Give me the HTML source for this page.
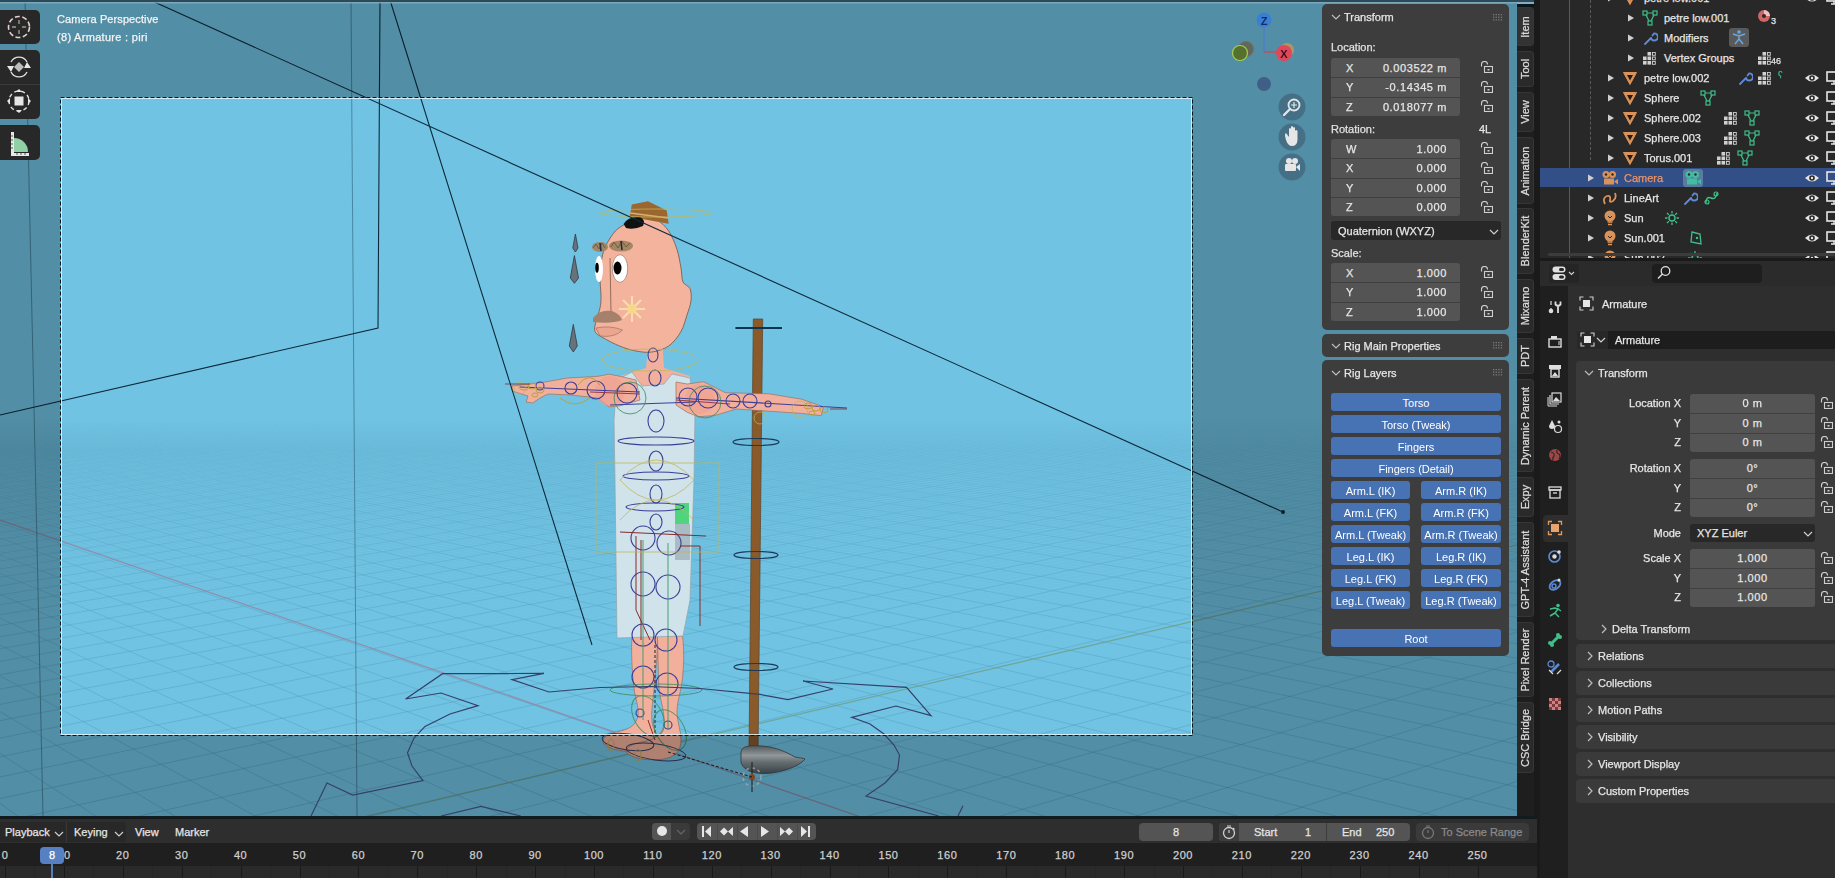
<!DOCTYPE html>
<html><head><meta charset="utf-8"><style>*{margin:0;padding:0;box-sizing:border-box}
html,body{width:1835px;height:878px;overflow:hidden;background:#1d1d1d;font-family:"Liberation Sans",sans-serif;font-size:11px;color:#e6e6e6}
.a{position:absolute}
.t{position:absolute;white-space:nowrap;line-height:15px;-webkit-text-stroke:0.25px currentColor}
.n{letter-spacing:0.6px}
.tbx{left:0;width:40px;background:#282828;border-radius:0 5px 5px 0}
.np{left:1322px;width:187px;background:#3d3d3d;border-radius:5px}
.fblk{background:#545454;border-radius:3px}
.lbl{color:#e0e0e0}
.btnb{background:#4772b3;border-radius:3px;color:#fff;text-align:center;height:18px;line-height:20px}
.tab{left:1517px;width:17px;border:1px solid #363636;border-left:none;border-radius:0 4px 4px 0}
.tab span{position:absolute;left:50%;top:50%;transform:translate(-50%,-50%) rotate(-90deg);white-space:nowrap;color:#dcdcdc;font-size:11px;line-height:12px;-webkit-text-stroke:0.25px currentColor}
</style></head><body>
<div class="a" style="left:0;top:0;width:1517px;height:816px;overflow:hidden">
<svg class="a" style="left:0;top:0" width="1517" height="816" viewBox="0 0 1517 816">
<defs><linearGradient id="gf" x1="0" y1="415" x2="0" y2="816" gradientUnits="userSpaceOnUse"><stop offset="0" stop-color="#fff" stop-opacity="0"/><stop offset="0.07" stop-color="#fff" stop-opacity="0.0"/><stop offset="0.2" stop-color="#fff" stop-opacity="0.25"/><stop offset="0.45" stop-color="#fff" stop-opacity="0.7"/><stop offset="1" stop-color="#fff" stop-opacity="1"/></linearGradient><linearGradient id="gb" x1="0" y1="420" x2="0" y2="620" gradientUnits="userSpaceOnUse"><stop offset="0" stop-color="#fff" stop-opacity="0"/><stop offset="0.15" stop-color="#fff" stop-opacity="0.5"/><stop offset="0.45" stop-color="#fff" stop-opacity="0.4"/><stop offset="1" stop-color="#fff" stop-opacity="0"/></linearGradient><mask id="gbm"><rect x="0" y="420" width="1517" height="200" fill="url(#gb)"/></mask><mask id="gm"><rect x="0" y="415" width="1517" height="401" fill="url(#gf)"/></mask></defs>
<rect width="1517" height="816" fill="#71c3e3"/>
<path mask="url(#gm)" d="M3764.0 -5.5L-3575.7 3177.0M3764.0 -5.5L-3661.5 2971.3M3764.0 -5.5L-3730.4 2793.4M3764.0 -5.5L-3786.5 2638.3M3764.0 -5.5L-3832.8 2502.0M3764.0 -5.5L-3871.6 2381.4M3764.0 -5.5L-3904.3 2274.0M3764.0 -5.5L-3932.3 2177.9M3764.0 -5.5L-3956.3 2091.4M3764.0 -5.5L-3977.1 2013.1M3764.0 -5.5L-3995.3 1941.9M3764.0 -5.5L-4011.3 1877.0M3764.0 -5.5L-4025.5 1817.6M3764.0 -5.5L-4038.1 1762.9M3764.0 -5.5L-4049.3 1712.5M3764.0 -5.5L-4059.4 1665.9M3764.0 -5.5L-4068.5 1622.7M3764.0 -5.5L-4076.8 1582.5M3764.0 -5.5L-4084.3 1545.0M3764.0 -5.5L-4091.1 1509.9M3764.0 -5.5L-4097.4 1477.1M3764.0 -5.5L-4103.1 1446.3M3764.0 -5.5L-4108.4 1417.4M3764.0 -5.5L-4113.3 1390.1M3764.0 -5.5L-4117.8 1364.4M3764.0 -5.5L-4122.0 1340.1M3764.0 -5.5L-4125.9 1317.1M3764.0 -5.5L-4129.5 1295.3M3764.0 -5.5L-4132.9 1274.6M3764.0 -5.5L-4136.1 1254.9M3764.0 -5.5L-4139.0 1236.2M3764.0 -5.5L-4141.8 1218.3M3764.0 -5.5L-4144.4 1201.3M3764.0 -5.5L-4146.9 1185.1M3764.0 -5.5L-4149.2 1169.6M3764.0 -5.5L-4151.4 1154.7M3764.0 -5.5L-4153.5 1140.5M3764.0 -5.5L-4155.4 1126.8M3764.0 -5.5L-4157.3 1113.8M3764.0 -5.5L-4159.1 1101.2M3764.0 -5.5L-4160.7 1089.1M3764.0 -5.5L-4162.3 1077.5M3764.0 -5.5L-4163.8 1066.4M3764.0 -5.5L-4165.3 1055.6M3764.0 -5.5L-4166.7 1045.2M3764.0 -5.5L-4168.0 1035.2M3764.0 -5.5L-4169.2 1025.6M3764.0 -5.5L-4170.5 1016.3M3764.0 -5.5L-4171.6 1007.3M3764.0 -5.5L-4172.7 998.6M3764.0 -5.5L-4173.8 990.2M3764.0 -5.5L-4174.8 982.0M3764.0 -5.5L-4175.8 974.1M3764.0 -5.5L-4176.7 966.5M3764.0 -5.5L-4177.6 959.1M3764.0 -5.5L-4178.5 951.9M3764.0 -5.5L-4179.3 944.9M3764.0 -5.5L-4180.1 938.2M3764.0 -5.5L-4180.9 931.6M3764.0 -5.5L-4181.6 925.2M3764.0 -5.5L-4182.4 919.0M3764.0 -5.5L-4183.1 913.0M3764.0 -5.5L-4183.7 907.1M3764.0 -5.5L-4184.4 901.4M3764.0 -5.5L-4185.0 895.9M3764.0 -5.5L-4185.6 890.5M3764.0 -5.5L-4186.2 885.2M3764.0 -5.5L-4186.8 880.1M3764.0 -5.5L-4187.4 875.1M3764.0 -5.5L-4187.9 870.2M3764.0 -5.5L-4188.4 865.5M3764.0 -5.5L-4188.9 860.8M3764.0 -5.5L-4189.4 856.3M3764.0 -5.5L-4189.9 851.9M3764.0 -5.5L-4190.4 847.5M3764.0 -5.5L-4190.8 843.3M3764.0 -5.5L-4191.3 839.2M3764.0 -5.5L-4191.7 835.2M-736.9 271.2L4831.7 6014.9M-736.9 271.2L5196.7 5637.0M-736.9 271.2L5498.9 5282.6M-736.9 271.2L5749.2 4954.1M-736.9 271.2L5957.1 4651.9M-736.9 271.2L6130.3 4375.0M-736.9 271.2L6275.4 4121.7M-736.9 271.2L6397.6 3890.4M-736.9 271.2L6501.0 3678.9M-736.9 271.2L6589.0 3485.3M-736.9 271.2L6664.3 3307.9M-736.9 271.2L6729.1 3145.1M-736.9 271.2L6785.0 2995.3M-736.9 271.2L6833.6 2857.1M-736.9 271.2L6876.0 2729.5M-736.9 271.2L6913.1 2611.4M-736.9 271.2L6945.8 2501.8M-736.9 271.2L6974.7 2399.8M-736.9 271.2L7000.3 2304.9M-736.9 271.2L7023.0 2216.2M-736.9 271.2L7043.3 2133.3M-736.9 271.2L7061.5 2055.6M-736.9 271.2L7077.9 1982.7M-736.9 271.2L7092.6 1914.1M-736.9 271.2L7105.8 1849.6M-736.9 271.2L7117.8 1788.7M-736.9 271.2L7128.7 1731.2M-736.9 271.2L7138.6 1676.8M-736.9 271.2L7147.7 1625.2M-736.9 271.2L7155.9 1576.3M-736.9 271.2L7163.4 1529.9M-736.9 271.2L7170.3 1485.8M-736.9 271.2L7176.7 1443.8M-736.9 271.2L7182.5 1403.7M-736.9 271.2L7187.9 1365.5M-736.9 271.2L7192.8 1329.1M-736.9 271.2L7197.4 1294.2M-736.9 271.2L7201.6 1260.9M-736.9 271.2L7205.5 1228.9M-736.9 271.2L7209.2 1198.3M-736.9 271.2L7212.5 1168.9M-736.9 271.2L7215.7 1140.8M-736.9 271.2L7218.6 1113.7M-736.9 271.2L7221.3 1087.6M-736.9 271.2L7223.8 1062.6M-736.9 271.2L7226.2 1038.5M-736.9 271.2L7228.4 1015.2M-736.9 271.2L7230.5 992.8M-736.9 271.2L7232.4 971.2M-736.9 271.2L7234.2 950.3M-736.9 271.2L7235.9 930.2M-736.9 271.2L7237.5 910.7M-736.9 271.2L7239.0 891.8M-736.9 271.2L7240.4 873.6M-736.9 271.2L7241.7 856.0M-736.9 271.2L7242.9 838.9M-736.9 271.2L7244.1 822.3M-736.9 271.2L7245.2 806.2M-736.9 271.2L7246.2 790.7M-736.9 271.2L7247.2 775.6M-736.9 271.2L7248.1 760.9M-736.9 271.2L7248.9 746.7M-736.9 271.2L7249.7 732.8M-736.9 271.2L7250.5 719.4M-736.9 271.2L7251.2 706.3M-736.9 271.2L7251.9 693.6" fill="none" stroke="#4a93b4" stroke-width="1" stroke-opacity="0.42"/>
<path mask="url(#gbm)" d="M3764.0 -5.5L-3575.7 3177.0M3764.0 -5.5L-3599.0 3122.7M3764.0 -5.5L-3621.0 3070.3M3764.0 -5.5L-3641.8 3019.9M3764.0 -5.5L-3661.5 2971.3M3764.0 -5.5L-3680.1 2924.5M3764.0 -5.5L-3697.8 2879.3M3764.0 -5.5L-3714.5 2835.6M3764.0 -5.5L-3730.4 2793.4M3764.0 -5.5L-3745.5 2752.7M3764.0 -5.5L-3759.8 2713.3M3764.0 -5.5L-3773.5 2675.2M3764.0 -5.5L-3786.5 2638.3M3764.0 -5.5L-3798.9 2602.6M3764.0 -5.5L-3810.7 2568.0M3764.0 -5.5L-3822.0 2534.5M3764.0 -5.5L-3832.8 2502.0M3764.0 -5.5L-3843.2 2470.5M3764.0 -5.5L-3853.1 2439.9M3764.0 -5.5L-3862.5 2410.2M3764.0 -5.5L-3871.6 2381.4M3764.0 -5.5L-3880.3 2353.4M3764.0 -5.5L-3888.6 2326.2M3764.0 -5.5L-3896.6 2299.8M3764.0 -5.5L-3904.3 2274.0M3764.0 -5.5L-3911.7 2249.0M3764.0 -5.5L-3918.8 2224.7M3764.0 -5.5L-3925.7 2201.0M3764.0 -5.5L-3932.3 2177.9M3764.0 -5.5L-3938.6 2155.4M3764.0 -5.5L-3944.7 2133.5M3764.0 -5.5L-3950.6 2112.2M3764.0 -5.5L-3956.3 2091.4M3764.0 -5.5L-3961.8 2071.1M3764.0 -5.5L-3967.1 2051.3M3764.0 -5.5L-3972.2 2031.9M3764.0 -5.5L-3977.1 2013.1M3764.0 -5.5L-3981.9 1994.7M3764.0 -5.5L-3986.5 1976.7M3764.0 -5.5L-3991.0 1959.1M3764.0 -5.5L-3995.3 1941.9M3764.0 -5.5L-3999.5 1925.2M3764.0 -5.5L-4003.6 1908.8M3764.0 -5.5L-4007.5 1892.7M3764.0 -5.5L-4011.3 1877.0M3764.0 -5.5L-4015.0 1861.7M3764.0 -5.5L-4018.6 1846.7M3764.0 -5.5L-4022.1 1832.0M3764.0 -5.5L-4025.5 1817.6M3764.0 -5.5L-4028.8 1803.5M3764.0 -5.5L-4032.0 1789.7M3764.0 -5.5L-4035.1 1776.2M3764.0 -5.5L-4038.1 1762.9M3764.0 -5.5L-4041.0 1750.0M3764.0 -5.5L-4043.8 1737.2M3764.0 -5.5L-4046.6 1724.8M3764.0 -5.5L-4049.3 1712.5M3764.0 -5.5L-4051.9 1700.5M3764.0 -5.5L-4054.5 1688.8M3764.0 -5.5L-4057.0 1677.2M3764.0 -5.5L-4059.4 1665.9M3764.0 -5.5L-4061.8 1654.8M3764.0 -5.5L-4064.1 1643.9M3764.0 -5.5L-4066.3 1633.2M3764.0 -5.5L-4068.5 1622.7M3764.0 -5.5L-4070.7 1612.4M3764.0 -5.5L-4072.8 1602.2M3764.0 -5.5L-4074.8 1592.3M3764.0 -5.5L-4076.8 1582.5M3764.0 -5.5L-4078.7 1572.9M3764.0 -5.5L-4080.6 1563.4M3764.0 -5.5L-4082.5 1554.1M3764.0 -5.5L-4084.3 1545.0M3764.0 -5.5L-4086.1 1536.0M3764.0 -5.5L-4087.8 1527.2M3764.0 -5.5L-4089.5 1518.5M3764.0 -5.5L-4091.1 1509.9M3764.0 -5.5L-4092.7 1501.5M3764.0 -5.5L-4094.3 1493.3M3764.0 -5.5L-4095.9 1485.1M3764.0 -5.5L-4097.4 1477.1M3764.0 -5.5L-4098.9 1469.3M3764.0 -5.5L-4100.3 1461.5M3764.0 -5.5L-4101.7 1453.9M3764.0 -5.5L-4103.1 1446.3M3764.0 -5.5L-4104.5 1438.9M3764.0 -5.5L-4105.8 1431.7M3764.0 -5.5L-4107.1 1424.5M3764.0 -5.5L-4108.4 1417.4M3764.0 -5.5L-4109.7 1410.4M3764.0 -5.5L-4110.9 1403.6M3764.0 -5.5L-4112.1 1396.8M3764.0 -5.5L-4113.3 1390.1M3764.0 -5.5L-4114.5 1383.6M3764.0 -5.5L-4115.6 1377.1M3764.0 -5.5L-4116.7 1370.7M3764.0 -5.5L-4117.8 1364.4M3764.0 -5.5L-4118.9 1358.2M3764.0 -5.5L-4119.9 1352.1M3764.0 -5.5L-4121.0 1346.0M3764.0 -5.5L-4122.0 1340.1M3764.0 -5.5L-4123.0 1334.2M3764.0 -5.5L-4124.0 1328.4M3764.0 -5.5L-4124.9 1322.7M3764.0 -5.5L-4125.9 1317.1M3764.0 -5.5L-4126.8 1311.5M3764.0 -5.5L-4127.7 1306.0M3764.0 -5.5L-4128.6 1300.6M3764.0 -5.5L-4129.5 1295.3M3764.0 -5.5L-4130.4 1290.0M3764.0 -5.5L-4131.2 1284.8M3764.0 -5.5L-4132.1 1279.6M3764.0 -5.5L-4132.9 1274.6M3764.0 -5.5L-4133.7 1269.6M3764.0 -5.5L-4134.5 1264.6M3764.0 -5.5L-4135.3 1259.7M3764.0 -5.5L-4136.1 1254.9M3764.0 -5.5L-4136.8 1250.1M3764.0 -5.5L-4137.6 1245.4M3764.0 -5.5L-4138.3 1240.8M3764.0 -5.5L-4139.0 1236.2M3764.0 -5.5L-4139.7 1231.6M3764.0 -5.5L-4140.4 1227.2M3764.0 -5.5L-4141.1 1222.7M3764.0 -5.5L-4141.8 1218.3M3764.0 -5.5L-4142.5 1214.0M3764.0 -5.5L-4143.1 1209.7M3764.0 -5.5L-4143.8 1205.5M3764.0 -5.5L-4144.4 1201.3M3764.0 -5.5L-4145.0 1197.2M3764.0 -5.5L-4145.7 1193.1M3764.0 -5.5L-4146.3 1189.1M3764.0 -5.5L-4146.9 1185.1M3764.0 -5.5L-4147.5 1181.1M3764.0 -5.5L-4148.1 1177.2M3764.0 -5.5L-4148.6 1173.4M3764.0 -5.5L-4149.2 1169.6M3764.0 -5.5L-4149.8 1165.8M3764.0 -5.5L-4150.3 1162.1M3764.0 -5.5L-4150.9 1158.4M3764.0 -5.5L-4151.4 1154.7M3764.0 -5.5L-4151.9 1151.1M3764.0 -5.5L-4152.4 1147.5M3764.0 -5.5L-4153.0 1144.0M3764.0 -5.5L-4153.5 1140.5M3764.0 -5.5L-4154.0 1137.0M3764.0 -5.5L-4154.5 1133.6M3764.0 -5.5L-4154.9 1130.2M3764.0 -5.5L-4155.4 1126.8M3764.0 -5.5L-4155.9 1123.5M3764.0 -5.5L-4156.4 1120.2M3764.0 -5.5L-4156.8 1117.0M3764.0 -5.5L-4157.3 1113.8M3764.0 -5.5L-4157.7 1110.6M3764.0 -5.5L-4158.2 1107.4M3764.0 -5.5L-4158.6 1104.3M3764.0 -5.5L-4159.1 1101.2M3764.0 -5.5L-4159.5 1098.1M3764.0 -5.5L-4159.9 1095.1M3764.0 -5.5L-4160.3 1092.1M3764.0 -5.5L-4160.7 1089.1M3764.0 -5.5L-4161.1 1086.2M3764.0 -5.5L-4161.5 1083.3M3764.0 -5.5L-4161.9 1080.4M3764.0 -5.5L-4162.3 1077.5M3764.0 -5.5L-4162.7 1074.7M3764.0 -5.5L-4163.1 1071.9M3764.0 -5.5L-4163.5 1069.1M3764.0 -5.5L-4163.8 1066.4M3764.0 -5.5L-4164.2 1063.6M3764.0 -5.5L-4164.6 1060.9M3764.0 -5.5L-4164.9 1058.3M3764.0 -5.5L-4165.3 1055.6M3764.0 -5.5L-4165.6 1053.0M3764.0 -5.5L-4166.0 1050.4M3764.0 -5.5L-4166.3 1047.8M3764.0 -5.5L-4166.7 1045.2M3764.0 -5.5L-4167.0 1042.7M3764.0 -5.5L-4167.3 1040.2M3764.0 -5.5L-4167.7 1037.7M3764.0 -5.5L-4168.0 1035.2M3764.0 -5.5L-4168.3 1032.8M3764.0 -5.5L-4168.6 1030.4M3764.0 -5.5L-4168.9 1028.0M3764.0 -5.5L-4169.2 1025.6M3764.0 -5.5L-4169.6 1023.2M3764.0 -5.5L-4169.9 1020.9M3764.0 -5.5L-4170.2 1018.6M3764.0 -5.5L-4170.5 1016.3M3764.0 -5.5L-4170.7 1014.0M3764.0 -5.5L-4171.0 1011.7M3764.0 -5.5L-4171.3 1009.5M3764.0 -5.5L-4171.6 1007.3M3764.0 -5.5L-4171.9 1005.1M3764.0 -5.5L-4172.2 1002.9M3764.0 -5.5L-4172.4 1000.7M3764.0 -5.5L-4172.7 998.6M3764.0 -5.5L-4173.0 996.5M3764.0 -5.5L-4173.2 994.3M3764.0 -5.5L-4173.5 992.2M3764.0 -5.5L-4173.8 990.2M3764.0 -5.5L-4174.0 988.1M3764.0 -5.5L-4174.3 986.1M3764.0 -5.5L-4174.5 984.0M3764.0 -5.5L-4174.8 982.0M3764.0 -5.5L-4175.0 980.0M3764.0 -5.5L-4175.3 978.1M3764.0 -5.5L-4175.5 976.1M3764.0 -5.5L-4175.8 974.1M3764.0 -5.5L-4176.0 972.2M3764.0 -5.5L-4176.2 970.3M3764.0 -5.5L-4176.5 968.4M3764.0 -5.5L-4176.7 966.5M3764.0 -5.5L-4176.9 964.6M3764.0 -5.5L-4177.2 962.8M3764.0 -5.5L-4177.4 960.9M3764.0 -5.5L-4177.6 959.1M3764.0 -5.5L-4177.8 957.3M3764.0 -5.5L-4178.0 955.5M3764.0 -5.5L-4178.3 953.7M3764.0 -5.5L-4178.5 951.9M3764.0 -5.5L-4178.7 950.1M3764.0 -5.5L-4178.9 948.4M3764.0 -5.5L-4179.1 946.7M3764.0 -5.5L-4179.3 944.9M3764.0 -5.5L-4179.5 943.2M3764.0 -5.5L-4179.7 941.5M3764.0 -5.5L-4179.9 939.9M3764.0 -5.5L-4180.1 938.2M3764.0 -5.5L-4180.3 936.5M3764.0 -5.5L-4180.5 934.9M3764.0 -5.5L-4180.7 933.2M3764.0 -5.5L-4180.9 931.6M3764.0 -5.5L-4181.1 930.0M3764.0 -5.5L-4181.3 928.4M3764.0 -5.5L-4181.5 926.8M3764.0 -5.5L-4181.6 925.2M3764.0 -5.5L-4181.8 923.7M3764.0 -5.5L-4182.0 922.1M3764.0 -5.5L-4182.2 920.6M3764.0 -5.5L-4182.4 919.0M3764.0 -5.5L-4182.5 917.5M3764.0 -5.5L-4182.7 916.0M3764.0 -5.5L-4182.9 914.5M3764.0 -5.5L-4183.1 913.0M3764.0 -5.5L-4183.2 911.5M3764.0 -5.5L-4183.4 910.1M3764.0 -5.5L-4183.6 908.6M3764.0 -5.5L-4183.7 907.1M3764.0 -5.5L-4183.9 905.7M3764.0 -5.5L-4184.1 904.3M3764.0 -5.5L-4184.2 902.9M3764.0 -5.5L-4184.4 901.4M3764.0 -5.5L-4184.6 900.0M3764.0 -5.5L-4184.7 898.6M3764.0 -5.5L-4184.9 897.3M3764.0 -5.5L-4185.0 895.9M3764.0 -5.5L-4185.2 894.5M3764.0 -5.5L-4185.3 893.2M3764.0 -5.5L-4185.5 891.8M3764.0 -5.5L-4185.6 890.5M3764.0 -5.5L-4185.8 889.2M3764.0 -5.5L-4185.9 887.8M3764.0 -5.5L-4186.1 886.5M3764.0 -5.5L-4186.2 885.2M3764.0 -5.5L-4186.4 883.9M3764.0 -5.5L-4186.5 882.6M3764.0 -5.5L-4186.7 881.4M3764.0 -5.5L-4186.8 880.1M3764.0 -5.5L-4186.9 878.8M3764.0 -5.5L-4187.1 877.6M3764.0 -5.5L-4187.2 876.3M3764.0 -5.5L-4187.4 875.1M3764.0 -5.5L-4187.5 873.9M3764.0 -5.5L-4187.6 872.6M3764.0 -5.5L-4187.8 871.4M3764.0 -5.5L-4187.9 870.2M3764.0 -5.5L-4188.0 869.0M3764.0 -5.5L-4188.2 867.8M3764.0 -5.5L-4188.3 866.6M3764.0 -5.5L-4188.4 865.5M3764.0 -5.5L-4188.5 864.3M3764.0 -5.5L-4188.7 863.1M3764.0 -5.5L-4188.8 862.0M3764.0 -5.5L-4188.9 860.8M3764.0 -5.5L-4189.1 859.7M3764.0 -5.5L-4189.2 858.5M3764.0 -5.5L-4189.3 857.4M3764.0 -5.5L-4189.4 856.3M3764.0 -5.5L-4189.5 855.2M3764.0 -5.5L-4189.7 854.1M3764.0 -5.5L-4189.8 853.0M3764.0 -5.5L-4189.9 851.9M3764.0 -5.5L-4190.0 850.8M3764.0 -5.5L-4190.1 849.7M3764.0 -5.5L-4190.2 848.6M3764.0 -5.5L-4190.4 847.5M3764.0 -5.5L-4190.5 846.5M3764.0 -5.5L-4190.6 845.4M3764.0 -5.5L-4190.7 844.4M3764.0 -5.5L-4190.8 843.3M3764.0 -5.5L-4190.9 842.3M3764.0 -5.5L-4191.0 841.3M3764.0 -5.5L-4191.1 840.2M3764.0 -5.5L-4191.3 839.2M3764.0 -5.5L-4191.4 838.2M3764.0 -5.5L-4191.5 837.2M3764.0 -5.5L-4191.6 836.2M3764.0 -5.5L-4191.7 835.2M3764.0 -5.5L-4191.8 834.2M3764.0 -5.5L-4191.9 833.2M3764.0 -5.5L-4192.0 832.2M-736.9 271.2L4831.7 6014.9M-736.9 271.2L4929.5 5918.5M-736.9 271.2L5022.8 5823.3M-736.9 271.2L5111.8 5729.4M-736.9 271.2L5196.7 5637.0M-736.9 271.2L5277.7 5546.0M-736.9 271.2L5355.0 5456.6M-736.9 271.2L5428.7 5368.8M-736.9 271.2L5498.9 5282.6M-736.9 271.2L5566.0 5198.0M-736.9 271.2L5629.9 5115.1M-736.9 271.2L5691.0 5033.8M-736.9 271.2L5749.2 4954.1M-736.9 271.2L5804.8 4876.1M-736.9 271.2L5857.9 4799.8M-736.9 271.2L5908.6 4725.0M-736.9 271.2L5957.1 4651.9M-736.9 271.2L6003.3 4580.4M-736.9 271.2L6047.6 4510.4M-736.9 271.2L6089.9 4441.9M-736.9 271.2L6130.3 4375.0M-736.9 271.2L6169.0 4309.5M-736.9 271.2L6206.1 4245.5M-736.9 271.2L6241.5 4182.9M-736.9 271.2L6275.4 4121.7M-736.9 271.2L6308.0 4061.9M-736.9 271.2L6339.1 4003.4M-736.9 271.2L6369.0 3946.3M-736.9 271.2L6397.6 3890.4M-736.9 271.2L6425.1 3835.7M-736.9 271.2L6451.4 3782.2M-736.9 271.2L6476.7 3730.0M-736.9 271.2L6501.0 3678.9M-736.9 271.2L6524.4 3628.9M-736.9 271.2L6546.8 3580.0M-736.9 271.2L6568.3 3532.1M-736.9 271.2L6589.0 3485.3M-736.9 271.2L6608.9 3439.5M-736.9 271.2L6628.1 3394.7M-736.9 271.2L6646.6 3350.9M-736.9 271.2L6664.3 3307.9M-736.9 271.2L6681.4 3265.9M-736.9 271.2L6697.9 3224.8M-736.9 271.2L6713.8 3184.5M-736.9 271.2L6729.1 3145.1M-736.9 271.2L6743.8 3106.5M-736.9 271.2L6758.0 3068.6M-736.9 271.2L6771.8 3031.6M-736.9 271.2L6785.0 2995.3M-736.9 271.2L6797.8 2959.7M-736.9 271.2L6810.2 2924.8M-736.9 271.2L6822.1 2890.6M-736.9 271.2L6833.6 2857.1M-736.9 271.2L6844.7 2824.3M-736.9 271.2L6855.5 2792.1M-736.9 271.2L6865.9 2760.5M-736.9 271.2L6876.0 2729.5M-736.9 271.2L6885.7 2699.1M-736.9 271.2L6895.2 2669.3M-736.9 271.2L6904.3 2640.1M-736.9 271.2L6913.1 2611.4M-736.9 271.2L6921.7 2583.2M-736.9 271.2L6930.0 2555.6M-736.9 271.2L6938.0 2528.4M-736.9 271.2L6945.8 2501.8M-736.9 271.2L6953.4 2475.6M-736.9 271.2L6960.7 2449.9M-736.9 271.2L6967.8 2424.6M-736.9 271.2L6974.7 2399.8M-736.9 271.2L6981.4 2375.5M-736.9 271.2L6987.9 2351.5M-736.9 271.2L6994.2 2328.0M-736.9 271.2L7000.3 2304.9M-736.9 271.2L7006.2 2282.1M-736.9 271.2L7012.0 2259.8M-736.9 271.2L7017.6 2237.8M-736.9 271.2L7023.0 2216.2M-736.9 271.2L7028.3 2195.0M-736.9 271.2L7033.5 2174.1M-736.9 271.2L7038.5 2153.5M-736.9 271.2L7043.3 2133.3M-736.9 271.2L7048.1 2113.4M-736.9 271.2L7052.7 2093.8M-736.9 271.2L7057.2 2074.6M-736.9 271.2L7061.5 2055.6M-736.9 271.2L7065.8 2037.0M-736.9 271.2L7069.9 2018.6M-736.9 271.2L7073.9 2000.5M-736.9 271.2L7077.9 1982.7M-736.9 271.2L7081.7 1965.2M-736.9 271.2L7085.4 1947.9M-736.9 271.2L7089.0 1930.9M-736.9 271.2L7092.6 1914.1M-736.9 271.2L7096.0 1897.6M-736.9 271.2L7099.4 1881.4M-736.9 271.2L7102.6 1865.4M-736.9 271.2L7105.8 1849.6M-736.9 271.2L7108.9 1834.0M-736.9 271.2L7112.0 1818.7M-736.9 271.2L7114.9 1803.6M-736.9 271.2L7117.8 1788.7M-736.9 271.2L7120.7 1774.0M-736.9 271.2L7123.4 1759.5M-736.9 271.2L7126.1 1745.2M-736.9 271.2L7128.7 1731.2M-736.9 271.2L7131.3 1717.3M-736.9 271.2L7133.8 1703.6M-736.9 271.2L7136.2 1690.1M-736.9 271.2L7138.6 1676.8M-736.9 271.2L7141.0 1663.6M-736.9 271.2L7143.3 1650.6M-736.9 271.2L7145.5 1637.8M-736.9 271.2L7147.7 1625.2M-736.9 271.2L7149.8 1612.8M-736.9 271.2L7151.9 1600.5M-736.9 271.2L7153.9 1588.3M-736.9 271.2L7155.9 1576.3M-736.9 271.2L7157.8 1564.5M-736.9 271.2L7159.7 1552.8M-736.9 271.2L7161.6 1541.3M-736.9 271.2L7163.4 1529.9M-736.9 271.2L7165.2 1518.7M-736.9 271.2L7167.0 1507.6M-736.9 271.2L7168.7 1496.6M-736.9 271.2L7170.3 1485.8M-736.9 271.2L7172.0 1475.1M-736.9 271.2L7173.6 1464.5M-736.9 271.2L7175.1 1454.1M-736.9 271.2L7176.7 1443.8M-736.9 271.2L7178.2 1433.6M-736.9 271.2L7179.7 1423.5M-736.9 271.2L7181.1 1413.6M-736.9 271.2L7182.5 1403.7M-736.9 271.2L7183.9 1394.0M-736.9 271.2L7185.2 1384.4M-736.9 271.2L7186.6 1374.9M-736.9 271.2L7187.9 1365.5M-736.9 271.2L7189.2 1356.3M-736.9 271.2L7190.4 1347.1M-736.9 271.2L7191.6 1338.0M-736.9 271.2L7192.8 1329.1M-736.9 271.2L7194.0 1320.2M-736.9 271.2L7195.2 1311.4M-736.9 271.2L7196.3 1302.8M-736.9 271.2L7197.4 1294.2M-736.9 271.2L7198.5 1285.7M-736.9 271.2L7199.6 1277.3M-736.9 271.2L7200.6 1269.1M-736.9 271.2L7201.6 1260.9M-736.9 271.2L7202.6 1252.7M-736.9 271.2L7203.6 1244.7M-736.9 271.2L7204.6 1236.8M-736.9 271.2L7205.5 1228.9M-736.9 271.2L7206.5 1221.1M-736.9 271.2L7207.4 1213.5M-736.9 271.2L7208.3 1205.8M-736.9 271.2L7209.2 1198.3M-736.9 271.2L7210.0 1190.9M-736.9 271.2L7210.9 1183.5M-736.9 271.2L7211.7 1176.2M-736.9 271.2L7212.5 1168.9M-736.9 271.2L7213.3 1161.8M-736.9 271.2L7214.1 1154.7M-736.9 271.2L7214.9 1147.7M-736.9 271.2L7215.7 1140.8M-736.9 271.2L7216.4 1133.9M-736.9 271.2L7217.2 1127.1M-736.9 271.2L7217.9 1120.3M-736.9 271.2L7218.6 1113.7M-736.9 271.2L7219.3 1107.1M-736.9 271.2L7220.0 1100.5M-736.9 271.2L7220.6 1094.1M-736.9 271.2L7221.3 1087.6M-736.9 271.2L7222.0 1081.3M-736.9 271.2L7222.6 1075.0M-736.9 271.2L7223.2 1068.8M-736.9 271.2L7223.8 1062.6M-736.9 271.2L7224.4 1056.5M-736.9 271.2L7225.0 1050.4M-736.9 271.2L7225.6 1044.4M-736.9 271.2L7226.2 1038.5M-736.9 271.2L7226.8 1032.6M-736.9 271.2L7227.3 1026.7M-736.9 271.2L7227.9 1020.9M-736.9 271.2L7228.4 1015.2M-736.9 271.2L7228.9 1009.5M-736.9 271.2L7229.5 1003.9M-736.9 271.2L7230.0 998.3M-736.9 271.2L7230.5 992.8M-736.9 271.2L7231.0 987.3M-736.9 271.2L7231.4 981.9M-736.9 271.2L7231.9 976.5M-736.9 271.2L7232.4 971.2M-736.9 271.2L7232.9 965.9M-736.9 271.2L7233.3 960.7M-736.9 271.2L7233.8 955.5M-736.9 271.2L7234.2 950.3M-736.9 271.2L7234.6 945.2M-736.9 271.2L7235.1 940.1M-736.9 271.2L7235.5 935.1M-736.9 271.2L7235.9 930.2M-736.9 271.2L7236.3 925.2M-736.9 271.2L7236.7 920.3M-736.9 271.2L7237.1 915.5M-736.9 271.2L7237.5 910.7M-736.9 271.2L7237.9 905.9M-736.9 271.2L7238.2 901.2M-736.9 271.2L7238.6 896.5M-736.9 271.2L7239.0 891.8M-736.9 271.2L7239.3 887.2M-736.9 271.2L7239.7 882.6M-736.9 271.2L7240.0 878.1M-736.9 271.2L7240.4 873.6M-736.9 271.2L7240.7 869.1M-736.9 271.2L7241.0 864.7M-736.9 271.2L7241.4 860.3M-736.9 271.2L7241.7 856.0M-736.9 271.2L7242.0 851.6M-736.9 271.2L7242.3 847.3M-736.9 271.2L7242.6 843.1M-736.9 271.2L7242.9 838.9M-736.9 271.2L7243.2 834.7M-736.9 271.2L7243.5 830.5M-736.9 271.2L7243.8 826.4M-736.9 271.2L7244.1 822.3M-736.9 271.2L7244.4 818.2M-736.9 271.2L7244.6 814.2M-736.9 271.2L7244.9 810.2M-736.9 271.2L7245.2 806.2M-736.9 271.2L7245.4 802.3M-736.9 271.2L7245.7 798.4M-736.9 271.2L7245.9 794.5M-736.9 271.2L7246.2 790.7M-736.9 271.2L7246.4 786.9M-736.9 271.2L7246.7 783.1M-736.9 271.2L7246.9 779.3M-736.9 271.2L7247.2 775.6M-736.9 271.2L7247.4 771.9M-736.9 271.2L7247.6 768.2M-736.9 271.2L7247.9 764.5M-736.9 271.2L7248.1 760.9M-736.9 271.2L7248.3 757.3M-736.9 271.2L7248.5 753.7M-736.9 271.2L7248.7 750.2M-736.9 271.2L7248.9 746.7M-736.9 271.2L7249.1 743.2M-736.9 271.2L7249.3 739.7M-736.9 271.2L7249.5 736.2M-736.9 271.2L7249.7 732.8M-736.9 271.2L7249.9 729.4M-736.9 271.2L7250.1 726.0M-736.9 271.2L7250.3 722.7M-736.9 271.2L7250.5 719.4M-736.9 271.2L7250.7 716.1M-736.9 271.2L7250.9 712.8M-736.9 271.2L7251.1 709.5M-736.9 271.2L7251.2 706.3M-736.9 271.2L7251.4 703.1M-736.9 271.2L7251.6 699.9M-736.9 271.2L7251.8 696.7M-736.9 271.2L7251.9 693.6M-736.9 271.2L7252.1 690.4M-736.9 271.2L7252.2 687.3M-736.9 271.2L7252.4 684.3" fill="none" stroke="#4a93b4" stroke-width="0.8" stroke-opacity="0.35"/>
<path d="M0 520L858 816" stroke="#9a7f9d" stroke-width="1.2" fill="none" opacity="0.8"/>
<path d="M367 816L1517 545" stroke="#6e9e83" stroke-width="1.2" fill="none" opacity="0.8"/>
<path d="M25 0L43 816M351 0L357 816" stroke="#3f7893" stroke-width="1" fill="none" opacity="0.8"/>
<path d="M753.3 319H762.7L758 752H749Z" fill="#8b5a2b" stroke="#5e4a33" stroke-width="0.8"/>
<path d="M735.4 328H782" stroke="#0a3550" stroke-width="1.8"/>
<ellipse cx="756" cy="442" rx="23" ry="3.5" fill="none" stroke="#1a3a5a" stroke-width="1.2"/>
<ellipse cx="756" cy="555" rx="22" ry="3.5" fill="none" stroke="#1a3a5a" stroke-width="1.2"/>
<ellipse cx="756" cy="667" rx="22" ry="3.5" fill="none" stroke="#1a3a5a" stroke-width="1.2"/>
<defs><linearGradient id="shoe" x1="0" y1="0" x2="0" y2="1"><stop offset="0" stop-color="#6f7a80"/><stop offset="0.35" stop-color="#c8cfd2"/><stop offset="0.6" stop-color="#8a959a"/><stop offset="1" stop-color="#4f5a60"/></linearGradient></defs>
<path d="M741 753C741 746 749 745 762 746C776 747 786 752 795 757C799 758 803 758 805 759C800 765 790 770 772 773C755 775 743 771 741 762Z" fill="url(#shoe)" stroke="#3f4a50" stroke-width="0.8"/>
<path d="M632 636H657.4C658 650 656 665 655 680C653 700 651 712 652 722C653 728 656 732 657 740C658 746 652 751 640 752C625 752 610 750 604 744C601 739 606 734 616 732C628 730 636 726 638 716C639 706 635 698 634 688C632 672 631 650 632 636Z" fill="#f2b09c" stroke="#9a7062" stroke-width="0.7"/>
<path d="M657.4 636H682.6C684 650 684 662 683 672C682 690 677 700 677 712C677 722 681 730 681 740C681 750 676 757 664 759C650 761 633 759 627 753C624 748 632 744 642 742C655 740 663 734 664 724C665 712 660 700 659 688C658 670 658 650 657.4 636Z" fill="#f2b09c" stroke="#9a7062" stroke-width="0.7"/>
<g fill="none" stroke="#34406a" stroke-width="1"><ellipse cx="628" cy="742" rx="26" ry="8" transform="rotate(8 628 742)"/><ellipse cx="656" cy="752" rx="30" ry="8" transform="rotate(8 656 752)"/></g>
<g fill="none" stroke="#c0b050" stroke-width="1"><ellipse cx="611" cy="745" rx="3" ry="6"/><ellipse cx="638" cy="755" rx="3" ry="6"/></g>
<path d="M648 346 L662.5 346 L664 368 L690 376 L690 392 L617 392 L620 376 L646 368Z" fill="#f2b09c"/>
<path d="M617 380 L632 372 L642 386 L664 384 L672 374 L690 378 L695 410 L694 480 L692 540 L690 600 L683 636 L617 638 L616 560 L615 480 L614 420Z" fill="#d0e2ea" stroke="#8fa3ad" stroke-width="0.7"/>
<rect x="675" y="503" width="14" height="21" fill="#52d47e"/><rect x="675" y="524" width="15" height="36" fill="#a9bcc4"/>
<path d="M512 386 L530 384 L545 382 L567.6 378 L598 376.3 L609 374.2 L620 376.3 L636 380 L640 400 L620 405.8 L609 406.9 L598 398 L569.8 394.9 L548 394 L540 398 L532.7 403 L526 402 L528 396 L512 391Z" fill="#f2b09c" stroke="#9a7062" stroke-width="0.7"/>
<path d="M676 382 L687.2 384 L703.6 381.8 L714.5 387.2 L725.4 392.7 L769 393.8 L801.7 399.2 L823.5 406.9 L821.3 415.6 L801.7 413.4 L769 411.2 L736.3 409 L714.5 415.6 L698 416.7 L687.2 412.3 L676 405Z" fill="#f2b09c" stroke="#9a7062" stroke-width="0.7"/>
<circle cx="610" cy="391" r="15" fill="#f0a090" opacity="0.6"/><circle cx="700" cy="399" r="15" fill="#f0a090" opacity="0.6"/>
<path d="M642 216.7C637.2 217.2 632.1 220.4 627.7 222.8C623.3 225.2 619.0 227.2 615.4 231C611.8 234.8 608.2 241.0 606 245.4C603.8 249.8 603.0 252.6 602 257.7C601.0 262.8 600.2 269.5 600 276C599.8 282.5 601.0 291.4 601 296.7C601.0 302.0 600.8 303.9 600 308C599.2 312.1 596.8 317.1 596 321C595.2 324.9 593.8 328.7 595 331.5C596.2 334.3 598.9 335.3 603 337.7C607.1 340.1 614.0 343.8 619.5 346C625.0 348.2 630.6 350.0 636 351C641.4 352.0 646.5 352.8 652 352C657.5 351.2 663.9 349.4 668.7 346C673.5 342.6 678.0 336.7 681 331.5C684.0 326.3 685.3 320.1 687 315C688.7 309.9 690.5 305.2 691 300.8C691.5 296.4 691.3 291.6 690 288.5C688.7 285.4 684.5 285.4 683 282C681.5 278.6 682.0 273.4 681 268C680.0 262.6 679.0 255.7 677 249.5C675.0 243.3 672.1 236.0 668.7 231C665.3 226.0 660.9 222.1 656.4 219.7C651.9 217.3 646.8 216.2 642 216.7Z" fill="#f3b39d" stroke="#7f6050" stroke-width="0.9"/>
<path d="M631.8 204.4 L648 201.3 L666.7 210.5 L668.7 223.8 L629.7 216.7Z" fill="#9c6630"/>
<path d="M630 213L668 218" stroke="#d8b070" stroke-width="1.5"/>
<path d="M623.6 224Q628 216 640 217Q646 220 643 226Q634 230 626 228Z" fill="#111"/>
<ellipse cx="620" cy="268.5" rx="7.7" ry="13.8" fill="#fff" stroke="#8a6a5a" stroke-width="0.6"/><ellipse cx="617.5" cy="268" rx="4" ry="6.5" fill="#000"/>
<ellipse cx="599" cy="269" rx="4" ry="13" fill="#fff"/><ellipse cx="597" cy="267.7" rx="1.8" ry="5" fill="#000"/>
<g fill="#a08462" opacity="0.95"><ellipse cx="600" cy="247" rx="8" ry="5"/><ellipse cx="621" cy="246" rx="12" ry="5.5"/></g>
<g fill="none" stroke="#6a5038" stroke-width="0.8"><path d="M593 248L596 244L599 249L602 243L605 248M611 247L614 242L618 248L622 241L626 247L630 243"/></g>
<path d="M600 243L601 251M621 241L622 250" stroke="#2a2a3a" stroke-width="1.6"/>
<path d="M610 258L611 313" stroke="#7a5a4a" stroke-width="0.8"/>
<path d="M593 318Q600 309 612 311Q620 314 622 320Q612 324 593 322Z" fill="#a5806a"/>
<path d="M596 328Q610 325 622.5 330Q615 338 600 336Z" fill="#eba590" stroke="#8a6a5a" stroke-width="0.6"/>
<g stroke="#fbe2b0" stroke-width="2" opacity="0.9"><path d="M632 296V322M619 309H645M623 300L641 318M641 300L623 318"/></g><circle cx="632" cy="309" r="5" fill="#f5d88a"/>
<g fill="none" stroke="#3b3f9a" stroke-width="1.1"><ellipse cx="653" cy="355" rx="5" ry="7"/><ellipse cx="655" cy="378" rx="6" ry="8"/><ellipse cx="656" cy="421" rx="8" ry="11"/><ellipse cx="656" cy="441" rx="38" ry="4"/><ellipse cx="656" cy="461" rx="7" ry="10"/><ellipse cx="656" cy="476" rx="33" ry="4"/><ellipse cx="656" cy="494" rx="6" ry="9"/><ellipse cx="655" cy="507" rx="29" ry="4"/><ellipse cx="656" cy="522" rx="6" ry="8"/><circle cx="643" cy="538" r="12"/><circle cx="669" cy="543" r="12"/><circle cx="643" cy="584" r="12"/><circle cx="668" cy="587" r="12"/><circle cx="643" cy="635" r="11"/><circle cx="666" cy="640" r="11"/><circle cx="643" cy="677" r="11"/><circle cx="667" cy="684" r="11"/><circle cx="640" cy="713" r="4"/><circle cx="668" cy="725" r="4"/><circle cx="571" cy="388" r="6"/><circle cx="540" cy="386" r="4"/><circle cx="596" cy="390" r="9"/><circle cx="627" cy="393" r="10"/><circle cx="688" cy="397" r="9"/><circle cx="708" cy="398" r="10"/><circle cx="733" cy="401" r="7"/><circle cx="750" cy="401" r="7"/><circle cx="768" cy="404" r="3"/><path d="M520 387L640 392M676 398L847 408M610 405L695 402"/></g>
<g fill="none" stroke="#8a2a2a" stroke-width="1"><path d="M620 532L706 536M636 536V610L650 640M680 546H700V626M641 540V640M648 720L655 740"/></g>
<g fill="none" stroke="#3a9a6a" stroke-width="0.9"><path d="M643 540V720M668 543V730"/></g>
<path d="M655 645V735" stroke="#222" stroke-width="1" stroke-dasharray="3 2"/>
<g fill="none" stroke="#c0b555" stroke-width="1" opacity="0.75"><rect x="596" y="463" width="123" height="89"/><ellipse cx="656" cy="213" rx="56" ry="4"/><ellipse cx="650" cy="360" rx="48" ry="11"/><path d="M620 480Q656 440 694 480Q656 520 620 480M620 520Q656 480 694 520"/><circle cx="520" cy="388" r="6"/><circle cx="800" cy="409" r="8"/><circle cx="760" cy="418" r="6"/></g>
<g fill="none" stroke="#3a8a5a" stroke-width="1" opacity="0.8"><ellipse cx="656" cy="690" rx="46" ry="6"/><ellipse cx="648" cy="716" rx="14" ry="22" transform="rotate(-30 648 716)"/><ellipse cx="670" cy="730" rx="14" ry="22" transform="rotate(-30 670 730)"/><circle cx="630" cy="398" r="16"/><circle cx="705" cy="402" r="16"/></g>
<g fill="none" stroke="#b8a040" stroke-width="1"><ellipse cx="524" cy="387" rx="5" ry="3"/><ellipse cx="532" cy="386" rx="4" ry="3"/><ellipse cx="540" cy="390" rx="4" ry="3"/><ellipse cx="535" cy="395" rx="3" ry="2"/><ellipse cx="808" cy="406" rx="4" ry="3"/><ellipse cx="816" cy="408" rx="4" ry="3"/><ellipse cx="824" cy="410" rx="4" ry="3"/><ellipse cx="812" cy="413" rx="3" ry="2"/><path d="M578 385Q590 370 600 385M560 398Q575 410 590 398"/></g>
<g fill="none" stroke="#8a3040" stroke-width="0.9"><path d="M505 384L530 384M830 409L847 409M590 392L640 394M676 400L730 404"/></g>
<path d="M575.4 234L578 248L575.4 252L572.8 248ZM574.4 255.6L578.5 278L574.4 283.3L570.3 278ZM573.3 324.4L577.3 346L573.3 352L569.3 346Z" fill="#66737d" stroke="#2e3a44" stroke-width="0.8"/>
<circle cx="752" cy="777" r="9" fill="none" stroke="#e8e8e8" stroke-width="1.5" stroke-dasharray="3 3" opacity="0.8"/><path d="M752 762V792" stroke="#222" stroke-width="1"/><circle cx="752" cy="777" r="3" fill="#b0602a"/>
<path d="M668 752L752 777" stroke="#222" stroke-width="1" stroke-dasharray="3 2"/>
<path d="M150 0L1283 512M390 0L592 645M380 0L378 328L0 415" stroke="#0d2a3c" stroke-width="1.1" fill="none"/>
<circle cx="1283" cy="512" r="2" fill="#0d2a3c"/>
<path d="M0 0H1517V816H0Z M60 97V735H1192V97Z" fill="#000" fill-opacity="0.27" fill-rule="evenodd"/>
<g fill="none" stroke="#34406a" stroke-width="1.2"><path d="M311 816 L327 783 L352.7 795 L423 780.6 L412 766 L407.5 752.8 L414 738 L425 726.4 L450 714 L478 705.6 L441 693 L405.6 699 L442.6 673.7 L544 673.4 L512 679.6 L549 692 L600 687.5 L650 686.5 L700 688.5 L760 694.4 L788 699.7 L833 689 L803 681 L906.5 687.4 L931 715.6 L896 706 L851.8 717.4 L870 724 L884 734 L894 745 L899.5 755 L897.7 769.4 L885 783 L866 796 L938.8 816"/><path d="M441 816L481 806.4L520.7 816M963 805.8L958 816"/></g>
<rect x="61.5" y="98.5" width="1130" height="636" fill="none" stroke="#e8f4fa" stroke-width="1" opacity="0.85"/>
<rect x="60.5" y="97.5" width="1132" height="638" fill="none" stroke="#0a1418" stroke-width="1" stroke-dasharray="4 2"/>
<rect x="0" y="0" width="1517" height="2" fill="#2c4b5a"/><rect x="0" y="2" width="1517" height="1.5" fill="#86aebf" opacity="0.8"/>
</svg>
<div class="t" style="left:57px;top:12px;color:#f4f4f4;font-size:11px;letter-spacing:0.1px">Camera Perspective</div>
<div class="t" style="left:57px;top:30px;color:#f4f4f4;font-size:11px;letter-spacing:0.3px">(8) Armature : piri</div>
<div class="a tbx" style="top:10px;height:34px"></div>
<div class="a tbx" style="top:50px;height:69px"></div>
<div class="a" style="left:0;top:84px;width:40px;height:1px;background:#3a3a3a"></div>
<div class="a tbx" style="top:125px;height:35px"></div>
<svg class="a" style="left:0;top:0" width="60" height="170" viewBox="0 0 60 170">
<circle cx="19" cy="27" r="10.5" fill="none" stroke="#e6cfcf" stroke-width="1.6" stroke-dasharray="5 2.5"/>
<path d="M19 20V24M19 30V34M12 27H16M22 27H26" stroke="#9a9a9a" stroke-width="1.4"/>
<path d="M11 62A9 9 0 0 1 27 62M27 72A9 9 0 0 1 11 72" fill="none" stroke="#e0e0e0" stroke-width="1.4"/>
<path d="M7 66L11 72L14 66ZM24 68L27 62L31 68Z" fill="#e6e6e6"/>
<path d="M19 62L24 67L19 72L14 67Z" fill="#bdbdbd"/>
<circle cx="19" cy="101" r="10" fill="none" stroke="#e0e0e0" stroke-width="1.4" stroke-dasharray="4 3"/>
<rect x="14.5" y="96.5" width="9" height="9" fill="#e6e6e6"/>
<path d="M16 92L19 89L22 92ZM16 110L19 113L22 110ZM10 98L7 101L10 104ZM28 98L31 101L28 104Z" fill="#e6e6e6"/>
<path d="M11 153V132H14V153H29V156H11Z" fill="#e8e8e8"/>
<path d="M14 152V138A14 14 0 0 1 28 152Z" fill="#8fd0a5"/>
<path d="M11 136H13M11 140H13M11 144H13M11 148H13M17 153V155M21 153V155M25 153V155" stroke="#555" stroke-width="1"/>
</svg>
<svg class="a" style="left:1220px;top:0" width="100" height="190" viewBox="1220 0 100 190">
<path d="M1264 21V52H1284" stroke="#4f7fc8" stroke-width="1.6" fill="none"/>
<path d="M1264 52H1285" stroke="#b75b5b" stroke-width="1.6"/>
<circle cx="1246" cy="49" r="7.5" fill="#5f6a56" stroke="#7a6a6a" stroke-width="1.2"/>
<circle cx="1240" cy="53" r="7.5" fill="#56702e" stroke="#a4d04e" stroke-width="1.2"/>
<circle cx="1264" cy="20" r="7.5" fill="#3a7fd6"/>
<text x="1264" y="24.5" font-size="11" font-weight="bold" text-anchor="middle" fill="#1a2a5a" font-family="Liberation Sans">Z</text>
<circle cx="1287" cy="50" r="7" fill="#d49a4a" opacity="0.7"/>
<circle cx="1284" cy="53" r="8" fill="#e0485a"/>
<text x="1284" y="57.5" font-size="11" font-weight="bold" text-anchor="middle" fill="#3a1020" font-family="Liberation Sans">X</text>
<circle cx="1264" cy="84" r="7" fill="#3f5f87"/>
<circle cx="1292" cy="107" r="13.5" fill="#456f85"/>
<circle cx="1292" cy="137" r="13.5" fill="#456f85"/>
<circle cx="1292" cy="167" r="13.5" fill="#456f85"/>
<circle cx="1294" cy="105" r="5.5" fill="none" stroke="#e6e6e6" stroke-width="1.8"/>
<path d="M1294 102V108M1291 105H1297" stroke="#e6e6e6" stroke-width="1.2"/>
<path d="M1290 109L1284 115" stroke="#e6e6e6" stroke-width="2.4" stroke-linecap="round"/>
<path d="M1286 140Q1284 134 1286 133L1289 137V129Q1290 127 1291 129V135V127Q1292 125 1293 127V135V128Q1294 126 1295 128V136V131Q1296 129 1297.5 131V140Q1297 146 1292 146Q1288 146 1286 140Z" fill="#e6e6e6"/>
<circle cx="1289" cy="161" r="3" fill="#e6e6e6"/><circle cx="1295" cy="161" r="3" fill="#e6e6e6"/>
<rect x="1285" y="164" width="11" height="7" rx="1" fill="#e6e6e6"/>
<path d="M1296 167L1300 164V171Z" fill="#e6e6e6"/>
</svg>
<div class="a np" style="top:4px;height:326px"></div>
<svg class="a" style="left:1331px;top:14px" width="10" height="6" viewBox="0 0 10 6"><path d="M1 1L5 5L9 1" fill="none" stroke="#bdbdbd" stroke-width="1.2"/></svg>
<div class="t" style="left:1344px;top:10px">Transform</div>
<svg class="a" style="left:1493px;top:14px" width="11" height="8"><rect x="0.0" y="0.0" width="1.3" height="1.3" fill="#7a7a7a"/><rect x="0.0" y="2.6" width="1.3" height="1.3" fill="#7a7a7a"/><rect x="0.0" y="5.2" width="1.3" height="1.3" fill="#7a7a7a"/><rect x="2.6" y="0.0" width="1.3" height="1.3" fill="#7a7a7a"/><rect x="2.6" y="2.6" width="1.3" height="1.3" fill="#7a7a7a"/><rect x="2.6" y="5.2" width="1.3" height="1.3" fill="#7a7a7a"/><rect x="5.2" y="0.0" width="1.3" height="1.3" fill="#7a7a7a"/><rect x="5.2" y="2.6" width="1.3" height="1.3" fill="#7a7a7a"/><rect x="5.2" y="5.2" width="1.3" height="1.3" fill="#7a7a7a"/><rect x="7.8" y="0.0" width="1.3" height="1.3" fill="#7a7a7a"/><rect x="7.8" y="2.6" width="1.3" height="1.3" fill="#7a7a7a"/><rect x="7.8" y="5.2" width="1.3" height="1.3" fill="#7a7a7a"/></svg>
<div class="t lbl" style="left:1331px;top:40px">Location:</div>
<div class="a fblk" style="left:1331px;top:58px;width:129px;height:58px"></div><div class="t" style="left:1346px;top:60.5px">X</div><div class="t n" style="right:70px;top:60.5px">0.003522 m</div><div class="a" style="left:1479px;top:61.0px"><svg width="14" height="12" viewBox="0 0 14 12"><path d="M2.5 5.5V3.5A3 3 0 0 1 8.5 3.5" fill="none" stroke="#cfcfcf" stroke-width="1.1"/><rect x="5.5" y="5.5" width="8" height="6" fill="none" stroke="#cfcfcf" stroke-width="1.1"/><rect x="8.5" y="8" width="2" height="1.5" fill="#cfcfcf"/></svg></div><div class="a" style="left:1331px;top:77.0px;width:129px;height:1px;background:#3f3f3f"></div><div class="t" style="left:1346px;top:80.0px">Y</div><div class="t n" style="right:70px;top:80.0px">-0.14345 m</div><div class="a" style="left:1479px;top:80.5px"><svg width="14" height="12" viewBox="0 0 14 12"><path d="M2.5 5.5V3.5A3 3 0 0 1 8.5 3.5" fill="none" stroke="#cfcfcf" stroke-width="1.1"/><rect x="5.5" y="5.5" width="8" height="6" fill="none" stroke="#cfcfcf" stroke-width="1.1"/><rect x="8.5" y="8" width="2" height="1.5" fill="#cfcfcf"/></svg></div><div class="a" style="left:1331px;top:96.5px;width:129px;height:1px;background:#3f3f3f"></div><div class="t" style="left:1346px;top:99.5px">Z</div><div class="t n" style="right:70px;top:99.5px">0.018077 m</div><div class="a" style="left:1479px;top:100.0px"><svg width="14" height="12" viewBox="0 0 14 12"><path d="M2.5 5.5V3.5A3 3 0 0 1 8.5 3.5" fill="none" stroke="#cfcfcf" stroke-width="1.1"/><rect x="5.5" y="5.5" width="8" height="6" fill="none" stroke="#cfcfcf" stroke-width="1.1"/><rect x="8.5" y="8" width="2" height="1.5" fill="#cfcfcf"/></svg></div>
<div class="t lbl" style="left:1331px;top:122px">Rotation:</div>
<div class="t" style="left:1479px;top:122px">4L</div>
<div class="a fblk" style="left:1331px;top:139px;width:129px;height:77px"></div><div class="t" style="left:1346px;top:141.5px">W</div><div class="t n" style="right:70px;top:141.5px">1.000</div><div class="a" style="left:1479px;top:142.0px"><svg width="14" height="12" viewBox="0 0 14 12"><path d="M2.5 5.5V3.5A3 3 0 0 1 8.5 3.5" fill="none" stroke="#cfcfcf" stroke-width="1.1"/><rect x="5.5" y="5.5" width="8" height="6" fill="none" stroke="#cfcfcf" stroke-width="1.1"/><rect x="8.5" y="8" width="2" height="1.5" fill="#cfcfcf"/></svg></div><div class="a" style="left:1331px;top:158.0px;width:129px;height:1px;background:#3f3f3f"></div><div class="t" style="left:1346px;top:161.0px">X</div><div class="t n" style="right:70px;top:161.0px">0.000</div><div class="a" style="left:1479px;top:161.5px"><svg width="14" height="12" viewBox="0 0 14 12"><path d="M2.5 5.5V3.5A3 3 0 0 1 8.5 3.5" fill="none" stroke="#cfcfcf" stroke-width="1.1"/><rect x="5.5" y="5.5" width="8" height="6" fill="none" stroke="#cfcfcf" stroke-width="1.1"/><rect x="8.5" y="8" width="2" height="1.5" fill="#cfcfcf"/></svg></div><div class="a" style="left:1331px;top:177.5px;width:129px;height:1px;background:#3f3f3f"></div><div class="t" style="left:1346px;top:180.5px">Y</div><div class="t n" style="right:70px;top:180.5px">0.000</div><div class="a" style="left:1479px;top:181.0px"><svg width="14" height="12" viewBox="0 0 14 12"><path d="M2.5 5.5V3.5A3 3 0 0 1 8.5 3.5" fill="none" stroke="#cfcfcf" stroke-width="1.1"/><rect x="5.5" y="5.5" width="8" height="6" fill="none" stroke="#cfcfcf" stroke-width="1.1"/><rect x="8.5" y="8" width="2" height="1.5" fill="#cfcfcf"/></svg></div><div class="a" style="left:1331px;top:197.0px;width:129px;height:1px;background:#3f3f3f"></div><div class="t" style="left:1346px;top:200.0px">Z</div><div class="t n" style="right:70px;top:200.0px">0.000</div><div class="a" style="left:1479px;top:200.5px"><svg width="14" height="12" viewBox="0 0 14 12"><path d="M2.5 5.5V3.5A3 3 0 0 1 8.5 3.5" fill="none" stroke="#cfcfcf" stroke-width="1.1"/><rect x="5.5" y="5.5" width="8" height="6" fill="none" stroke="#cfcfcf" stroke-width="1.1"/><rect x="8.5" y="8" width="2" height="1.5" fill="#cfcfcf"/></svg></div>
<div class="a" style="left:1331px;top:221px;width:170px;height:19px;background:#282828;border-radius:3px"></div>
<div class="t" style="left:1338px;top:224px">Quaternion (WXYZ)</div>
<svg class="a" style="left:1489px;top:229px" width="10" height="6" viewBox="0 0 10 6"><path d="M1 1L5 5L9 1" fill="none" stroke="#d0d0d0" stroke-width="1.2"/></svg>
<div class="t lbl" style="left:1331px;top:246px">Scale:</div>
<div class="a fblk" style="left:1331px;top:263px;width:129px;height:58px"></div><div class="t" style="left:1346px;top:265.5px">X</div><div class="t n" style="right:70px;top:265.5px">1.000</div><div class="a" style="left:1479px;top:266.0px"><svg width="14" height="12" viewBox="0 0 14 12"><path d="M2.5 5.5V3.5A3 3 0 0 1 8.5 3.5" fill="none" stroke="#cfcfcf" stroke-width="1.1"/><rect x="5.5" y="5.5" width="8" height="6" fill="none" stroke="#cfcfcf" stroke-width="1.1"/><rect x="8.5" y="8" width="2" height="1.5" fill="#cfcfcf"/></svg></div><div class="a" style="left:1331px;top:282.0px;width:129px;height:1px;background:#3f3f3f"></div><div class="t" style="left:1346px;top:285.0px">Y</div><div class="t n" style="right:70px;top:285.0px">1.000</div><div class="a" style="left:1479px;top:285.5px"><svg width="14" height="12" viewBox="0 0 14 12"><path d="M2.5 5.5V3.5A3 3 0 0 1 8.5 3.5" fill="none" stroke="#cfcfcf" stroke-width="1.1"/><rect x="5.5" y="5.5" width="8" height="6" fill="none" stroke="#cfcfcf" stroke-width="1.1"/><rect x="8.5" y="8" width="2" height="1.5" fill="#cfcfcf"/></svg></div><div class="a" style="left:1331px;top:301.5px;width:129px;height:1px;background:#3f3f3f"></div><div class="t" style="left:1346px;top:304.5px">Z</div><div class="t n" style="right:70px;top:304.5px">1.000</div><div class="a" style="left:1479px;top:305.0px"><svg width="14" height="12" viewBox="0 0 14 12"><path d="M2.5 5.5V3.5A3 3 0 0 1 8.5 3.5" fill="none" stroke="#cfcfcf" stroke-width="1.1"/><rect x="5.5" y="5.5" width="8" height="6" fill="none" stroke="#cfcfcf" stroke-width="1.1"/><rect x="8.5" y="8" width="2" height="1.5" fill="#cfcfcf"/></svg></div>
<div class="a np" style="top:334px;height:23px"></div>
<svg class="a" style="left:1331px;top:343px" width="10" height="6" viewBox="0 0 10 6"><path d="M1 1L5 5L9 1" fill="none" stroke="#bdbdbd" stroke-width="1.2"/></svg>
<div class="t" style="left:1344px;top:339px">Rig Main Properties</div>
<svg class="a" style="left:1493px;top:342px" width="11" height="8"><rect x="0.0" y="0.0" width="1.3" height="1.3" fill="#7a7a7a"/><rect x="0.0" y="2.6" width="1.3" height="1.3" fill="#7a7a7a"/><rect x="0.0" y="5.2" width="1.3" height="1.3" fill="#7a7a7a"/><rect x="2.6" y="0.0" width="1.3" height="1.3" fill="#7a7a7a"/><rect x="2.6" y="2.6" width="1.3" height="1.3" fill="#7a7a7a"/><rect x="2.6" y="5.2" width="1.3" height="1.3" fill="#7a7a7a"/><rect x="5.2" y="0.0" width="1.3" height="1.3" fill="#7a7a7a"/><rect x="5.2" y="2.6" width="1.3" height="1.3" fill="#7a7a7a"/><rect x="5.2" y="5.2" width="1.3" height="1.3" fill="#7a7a7a"/><rect x="7.8" y="0.0" width="1.3" height="1.3" fill="#7a7a7a"/><rect x="7.8" y="2.6" width="1.3" height="1.3" fill="#7a7a7a"/><rect x="7.8" y="5.2" width="1.3" height="1.3" fill="#7a7a7a"/></svg>
<div class="a np" style="top:360px;height:296px"></div>
<svg class="a" style="left:1331px;top:370px" width="10" height="6" viewBox="0 0 10 6"><path d="M1 1L5 5L9 1" fill="none" stroke="#bdbdbd" stroke-width="1.2"/></svg>
<div class="t" style="left:1344px;top:366px">Rig Layers</div>
<svg class="a" style="left:1493px;top:369px" width="11" height="8"><rect x="0.0" y="0.0" width="1.3" height="1.3" fill="#7a7a7a"/><rect x="0.0" y="2.6" width="1.3" height="1.3" fill="#7a7a7a"/><rect x="0.0" y="5.2" width="1.3" height="1.3" fill="#7a7a7a"/><rect x="2.6" y="0.0" width="1.3" height="1.3" fill="#7a7a7a"/><rect x="2.6" y="2.6" width="1.3" height="1.3" fill="#7a7a7a"/><rect x="2.6" y="5.2" width="1.3" height="1.3" fill="#7a7a7a"/><rect x="5.2" y="0.0" width="1.3" height="1.3" fill="#7a7a7a"/><rect x="5.2" y="2.6" width="1.3" height="1.3" fill="#7a7a7a"/><rect x="5.2" y="5.2" width="1.3" height="1.3" fill="#7a7a7a"/><rect x="7.8" y="0.0" width="1.3" height="1.3" fill="#7a7a7a"/><rect x="7.8" y="2.6" width="1.3" height="1.3" fill="#7a7a7a"/><rect x="7.8" y="5.2" width="1.3" height="1.3" fill="#7a7a7a"/></svg>
<div class="a btnb" style="left:1331px;top:393px;width:170px">Torso</div>
<div class="a btnb" style="left:1331px;top:415px;width:170px">Torso (Tweak)</div>
<div class="a btnb" style="left:1331px;top:437px;width:170px">Fingers</div>
<div class="a btnb" style="left:1331px;top:459px;width:170px">Fingers (Detail)</div>
<div class="a btnb" style="left:1331px;top:481px;width:79px">Arm.L (IK)</div>
<div class="a btnb" style="left:1421px;top:481px;width:80px">Arm.R (IK)</div>
<div class="a btnb" style="left:1331px;top:503px;width:79px">Arm.L (FK)</div>
<div class="a btnb" style="left:1421px;top:503px;width:80px">Arm.R (FK)</div>
<div class="a btnb" style="left:1331px;top:525px;width:79px">Arm.L (Tweak)</div>
<div class="a btnb" style="left:1421px;top:525px;width:80px">Arm.R (Tweak)</div>
<div class="a btnb" style="left:1331px;top:547px;width:79px">Leg.L (IK)</div>
<div class="a btnb" style="left:1421px;top:547px;width:80px">Leg.R (IK)</div>
<div class="a btnb" style="left:1331px;top:569px;width:79px">Leg.L (FK)</div>
<div class="a btnb" style="left:1421px;top:569px;width:80px">Leg.R (FK)</div>
<div class="a btnb" style="left:1331px;top:591px;width:79px">Leg.L (Tweak)</div>
<div class="a btnb" style="left:1421px;top:591px;width:80px">Leg.R (Tweak)</div>
<div class="a btnb" style="left:1331px;top:629px;width:170px">Root</div>
</div>
<div class="a" style="left:1517px;top:0;width:23px;height:816px;background:#1e1e1e"></div>
<div class="a" style="left:1517px;top:0;width:20px;height:2px;background:#2c4b5a"></div>
<div class="a" style="left:1517px;top:2px;width:20px;height:1.5px;background:#86aebf"></div>
<div class="a" style="left:1517px;top:3.5px;width:20px;height:3px;background:#0a161c"></div>
<div class="a tab" style="top:7px;height:39px;background:#333333"><span>Item</span></div>
<div class="a tab" style="top:51px;height:36px;background:#2a2a2a"><span>Tool</span></div>
<div class="a tab" style="top:92px;height:40px;background:#2a2a2a"><span>View</span></div>
<div class="a tab" style="top:137px;height:67px;background:#2a2a2a"><span>Animation</span></div>
<div class="a tab" style="top:208px;height:66px;background:#2a2a2a"><span>BlenderKit</span></div>
<div class="a tab" style="top:279px;height:54px;background:#2a2a2a"><span>Mixamo</span></div>
<div class="a tab" style="top:338px;height:36px;background:#2a2a2a"><span>PDT</span></div>
<div class="a tab" style="top:379px;height:93px;background:#2a2a2a"><span>Dynamic Parent</span></div>
<div class="a tab" style="top:477px;height:40px;background:#2a2a2a"><span>Expy</span></div>
<div class="a tab" style="top:522px;height:95px;background:#2a2a2a"><span>GPT-4 Assistant</span></div>
<div class="a tab" style="top:622px;height:75px;background:#2a2a2a"><span>Pixel Render</span></div>
<div class="a tab" style="top:702px;height:71px;background:#2a2a2a"><span>CSC Bridge</span></div>
<div class="a" style="left:1540px;top:0;width:295px;height:258px;background:#282828"></div>
<div class="a" style="left:1534px;top:0;width:6px;height:878px;background:#1a1a1a"></div>
<div class="a" style="left:1569px;top:0;width:1px;height:258px;background:#5a5a5a"></div>
<div class="a" style="left:1590px;top:0;width:0;height:160px;border-left:1px dashed #5a5a5a"></div>
<div class="a" style="left:1540px;top:168px;width:295px;height:19px;background:#334f88"></div>
<svg class="a" style="left:1607px;top:-6px" width="8" height="8" viewBox="0 0 8 8"><path d="M1 0.5L7 4L1 7.5Z" fill="#cfcfcf"/></svg>
<svg class="a" style="left:1622px;top:-10px" width="16" height="16" viewBox="0 0 16 16"><path d="M1.5 2.5H14.5L8 14.5Z" fill="#d8925a" stroke="#d8925a" stroke-width="1" stroke-linejoin="round"/><path d="M5 5H11L8 10.5Z" fill="#2a1a10"/></svg>
<div class="t" style="left:1644px;top:-9px;color:#e6e6e6">petre low.001</div>
<svg class="a" style="left:1804px;top:-8px" width="16" height="12" viewBox="0 0 16 12"><path d="M1 6Q8 -1 15 6Q8 13 1 6Z" fill="#e6e6e6"/><circle cx="8" cy="6" r="2.8" fill="#282828"/><circle cx="8" cy="6" r="1.2" fill="#e6e6e6"/></svg>
<svg class="a" style="left:1826px;top:-9px" width="16" height="14" viewBox="0 0 16 14"><rect x="1" y="1" width="14" height="9" fill="none" stroke="#e6e6e6" stroke-width="1.6"/><path d="M5 13H11M8 10V13" stroke="#e6e6e6" stroke-width="1.4"/></svg>
<svg class="a" style="left:1627px;top:14px" width="8" height="8" viewBox="0 0 8 8"><path d="M1 0.5L7 4L1 7.5Z" fill="#cfcfcf"/></svg>
<svg class="a" style="left:1642px;top:10px" width="16" height="16" viewBox="0 0 16 16"><path d="M3 3L13 3L8 13Z" fill="none" stroke="#3fbf8a" stroke-width="1.2"/><rect x="1" y="1" width="4" height="4" fill="#282828" stroke="#3fbf8a" stroke-width="1.2"/><rect x="11" y="1" width="4" height="4" fill="#282828" stroke="#3fbf8a" stroke-width="1.2"/><rect x="6" y="11" width="4" height="4" fill="#282828" stroke="#3fbf8a" stroke-width="1.2"/></svg>
<div class="t" style="left:1664px;top:11px;color:#e6e6e6">petre low.001</div>
<svg class="a" style="left:1627px;top:34px" width="8" height="8" viewBox="0 0 8 8"><path d="M1 0.5L7 4L1 7.5Z" fill="#cfcfcf"/></svg>
<svg class="a" style="left:1642px;top:30px" width="16" height="16" viewBox="0 0 16 16"><path d="M3 14L9 8M9 8A3.5 3.5 0 1 0 12 3.5L10.5 5.5" fill="none" stroke="#5f8ad8" stroke-width="1.8" stroke-linecap="round"/></svg>
<div class="t" style="left:1664px;top:31px;color:#e6e6e6">Modifiers</div>
<svg class="a" style="left:1627px;top:54px" width="8" height="8" viewBox="0 0 8 8"><path d="M1 0.5L7 4L1 7.5Z" fill="#cfcfcf"/></svg>
<svg class="a" style="left:1642px;top:50px" width="16" height="16" viewBox="0 0 16 16"><rect x="1.0" y="6.5" width="3.6" height="3.6" fill="#d0d0d0"/><rect x="5.5" y="2.0" width="3.6" height="3.6" fill="#d0d0d0"/><rect x="5.5" y="6.5" width="3.6" height="3.6" fill="#d0d0d0"/><rect x="1.0" y="11.0" width="3.6" height="3.6" fill="#d0d0d0"/><rect x="5.5" y="11.0" width="3.6" height="3.6" fill="#d0d0d0"/><rect x="10.5" y="2.5" width="2.8" height="2.8" fill="none" stroke="#d0d0d0" stroke-width="0.9"/><rect x="10.5" y="7.0" width="2.8" height="2.8" fill="none" stroke="#d0d0d0" stroke-width="0.9"/><rect x="10.5" y="11.5" width="2.8" height="2.8" fill="none" stroke="#d0d0d0" stroke-width="0.9"/></svg>
<div class="t" style="left:1664px;top:51px;color:#e6e6e6">Vertex Groups</div>
<svg class="a" style="left:1607px;top:74px" width="8" height="8" viewBox="0 0 8 8"><path d="M1 0.5L7 4L1 7.5Z" fill="#cfcfcf"/></svg>
<svg class="a" style="left:1622px;top:70px" width="16" height="16" viewBox="0 0 16 16"><path d="M1.5 2.5H14.5L8 14.5Z" fill="#d8925a" stroke="#d8925a" stroke-width="1" stroke-linejoin="round"/><path d="M5 5H11L8 10.5Z" fill="#2a1a10"/></svg>
<div class="t" style="left:1644px;top:71px;color:#e6e6e6">petre low.002</div>
<svg class="a" style="left:1804px;top:72px" width="16" height="12" viewBox="0 0 16 12"><path d="M1 6Q8 -1 15 6Q8 13 1 6Z" fill="#e6e6e6"/><circle cx="8" cy="6" r="2.8" fill="#282828"/><circle cx="8" cy="6" r="1.2" fill="#e6e6e6"/></svg>
<svg class="a" style="left:1826px;top:71px" width="16" height="14" viewBox="0 0 16 14"><rect x="1" y="1" width="14" height="9" fill="none" stroke="#e6e6e6" stroke-width="1.6"/><path d="M5 13H11M8 10V13" stroke="#e6e6e6" stroke-width="1.4"/></svg>
<svg class="a" style="left:1607px;top:94px" width="8" height="8" viewBox="0 0 8 8"><path d="M1 0.5L7 4L1 7.5Z" fill="#cfcfcf"/></svg>
<svg class="a" style="left:1622px;top:90px" width="16" height="16" viewBox="0 0 16 16"><path d="M1.5 2.5H14.5L8 14.5Z" fill="#d8925a" stroke="#d8925a" stroke-width="1" stroke-linejoin="round"/><path d="M5 5H11L8 10.5Z" fill="#2a1a10"/></svg>
<div class="t" style="left:1644px;top:91px;color:#e6e6e6">Sphere</div>
<svg class="a" style="left:1804px;top:92px" width="16" height="12" viewBox="0 0 16 12"><path d="M1 6Q8 -1 15 6Q8 13 1 6Z" fill="#e6e6e6"/><circle cx="8" cy="6" r="2.8" fill="#282828"/><circle cx="8" cy="6" r="1.2" fill="#e6e6e6"/></svg>
<svg class="a" style="left:1826px;top:91px" width="16" height="14" viewBox="0 0 16 14"><rect x="1" y="1" width="14" height="9" fill="none" stroke="#e6e6e6" stroke-width="1.6"/><path d="M5 13H11M8 10V13" stroke="#e6e6e6" stroke-width="1.4"/></svg>
<svg class="a" style="left:1607px;top:114px" width="8" height="8" viewBox="0 0 8 8"><path d="M1 0.5L7 4L1 7.5Z" fill="#cfcfcf"/></svg>
<svg class="a" style="left:1622px;top:110px" width="16" height="16" viewBox="0 0 16 16"><path d="M1.5 2.5H14.5L8 14.5Z" fill="#d8925a" stroke="#d8925a" stroke-width="1" stroke-linejoin="round"/><path d="M5 5H11L8 10.5Z" fill="#2a1a10"/></svg>
<div class="t" style="left:1644px;top:111px;color:#e6e6e6">Sphere.002</div>
<svg class="a" style="left:1804px;top:112px" width="16" height="12" viewBox="0 0 16 12"><path d="M1 6Q8 -1 15 6Q8 13 1 6Z" fill="#e6e6e6"/><circle cx="8" cy="6" r="2.8" fill="#282828"/><circle cx="8" cy="6" r="1.2" fill="#e6e6e6"/></svg>
<svg class="a" style="left:1826px;top:111px" width="16" height="14" viewBox="0 0 16 14"><rect x="1" y="1" width="14" height="9" fill="none" stroke="#e6e6e6" stroke-width="1.6"/><path d="M5 13H11M8 10V13" stroke="#e6e6e6" stroke-width="1.4"/></svg>
<svg class="a" style="left:1607px;top:134px" width="8" height="8" viewBox="0 0 8 8"><path d="M1 0.5L7 4L1 7.5Z" fill="#cfcfcf"/></svg>
<svg class="a" style="left:1622px;top:130px" width="16" height="16" viewBox="0 0 16 16"><path d="M1.5 2.5H14.5L8 14.5Z" fill="#d8925a" stroke="#d8925a" stroke-width="1" stroke-linejoin="round"/><path d="M5 5H11L8 10.5Z" fill="#2a1a10"/></svg>
<div class="t" style="left:1644px;top:131px;color:#e6e6e6">Sphere.003</div>
<svg class="a" style="left:1804px;top:132px" width="16" height="12" viewBox="0 0 16 12"><path d="M1 6Q8 -1 15 6Q8 13 1 6Z" fill="#e6e6e6"/><circle cx="8" cy="6" r="2.8" fill="#282828"/><circle cx="8" cy="6" r="1.2" fill="#e6e6e6"/></svg>
<svg class="a" style="left:1826px;top:131px" width="16" height="14" viewBox="0 0 16 14"><rect x="1" y="1" width="14" height="9" fill="none" stroke="#e6e6e6" stroke-width="1.6"/><path d="M5 13H11M8 10V13" stroke="#e6e6e6" stroke-width="1.4"/></svg>
<svg class="a" style="left:1607px;top:154px" width="8" height="8" viewBox="0 0 8 8"><path d="M1 0.5L7 4L1 7.5Z" fill="#cfcfcf"/></svg>
<svg class="a" style="left:1622px;top:150px" width="16" height="16" viewBox="0 0 16 16"><path d="M1.5 2.5H14.5L8 14.5Z" fill="#d8925a" stroke="#d8925a" stroke-width="1" stroke-linejoin="round"/><path d="M5 5H11L8 10.5Z" fill="#2a1a10"/></svg>
<div class="t" style="left:1644px;top:151px;color:#e6e6e6">Torus.001</div>
<svg class="a" style="left:1804px;top:152px" width="16" height="12" viewBox="0 0 16 12"><path d="M1 6Q8 -1 15 6Q8 13 1 6Z" fill="#e6e6e6"/><circle cx="8" cy="6" r="2.8" fill="#282828"/><circle cx="8" cy="6" r="1.2" fill="#e6e6e6"/></svg>
<svg class="a" style="left:1826px;top:151px" width="16" height="14" viewBox="0 0 16 14"><rect x="1" y="1" width="14" height="9" fill="none" stroke="#e6e6e6" stroke-width="1.6"/><path d="M5 13H11M8 10V13" stroke="#e6e6e6" stroke-width="1.4"/></svg>
<svg class="a" style="left:1587px;top:174px" width="8" height="8" viewBox="0 0 8 8"><path d="M1 0.5L7 4L1 7.5Z" fill="#cfcfcf"/></svg>
<svg class="a" style="left:1601px;top:170px" width="18" height="16" viewBox="0 0 18 16"><circle cx="5" cy="4.5" r="3.5" fill="#d8925a"/><circle cx="11.5" cy="4.5" r="3.5" fill="#d8925a"/><circle cx="5" cy="4.5" r="1.2" fill="#282828"/><circle cx="11.5" cy="4.5" r="1.2" fill="#282828"/><rect x="3" y="8.5" width="10" height="6" fill="#d8925a"/><path d="M13 11.5L17 9V14.5Z" fill="#d8925a"/></svg>
<div class="t" style="left:1624px;top:171px;color:#e8956a">Camera</div>
<svg class="a" style="left:1804px;top:172px" width="16" height="12" viewBox="0 0 16 12"><path d="M1 6Q8 -1 15 6Q8 13 1 6Z" fill="#e6e6e6"/><circle cx="8" cy="6" r="2.8" fill="#282828"/><circle cx="8" cy="6" r="1.2" fill="#e6e6e6"/></svg>
<svg class="a" style="left:1826px;top:171px" width="16" height="14" viewBox="0 0 16 14"><rect x="1" y="1" width="14" height="9" fill="none" stroke="#e6e6e6" stroke-width="1.6"/><path d="M5 13H11M8 10V13" stroke="#e6e6e6" stroke-width="1.4"/></svg>
<svg class="a" style="left:1587px;top:194px" width="8" height="8" viewBox="0 0 8 8"><path d="M1 0.5L7 4L1 7.5Z" fill="#cfcfcf"/></svg>
<svg class="a" style="left:1602px;top:190px" width="16" height="16" viewBox="0 0 16 16"><path d="M3 14Q0 8 5 6Q9 5 8 10Q7 13 11 11Q15 8 13 3" fill="none" stroke="#d8925a" stroke-width="1.8"/></svg>
<div class="t" style="left:1624px;top:191px;color:#e6e6e6">LineArt</div>
<svg class="a" style="left:1804px;top:192px" width="16" height="12" viewBox="0 0 16 12"><path d="M1 6Q8 -1 15 6Q8 13 1 6Z" fill="#e6e6e6"/><circle cx="8" cy="6" r="2.8" fill="#282828"/><circle cx="8" cy="6" r="1.2" fill="#e6e6e6"/></svg>
<svg class="a" style="left:1826px;top:191px" width="16" height="14" viewBox="0 0 16 14"><rect x="1" y="1" width="14" height="9" fill="none" stroke="#e6e6e6" stroke-width="1.6"/><path d="M5 13H11M8 10V13" stroke="#e6e6e6" stroke-width="1.4"/></svg>
<svg class="a" style="left:1587px;top:214px" width="8" height="8" viewBox="0 0 8 8"><path d="M1 0.5L7 4L1 7.5Z" fill="#cfcfcf"/></svg>
<svg class="a" style="left:1602px;top:210px" width="16" height="16" viewBox="0 0 16 16"><circle cx="8" cy="6" r="5.5" fill="#d8925a"/><path d="M5.5 12H10.5M6 14.5H10" stroke="#d8925a" stroke-width="1.4"/><path d="M6 6L8 8L10 6" fill="none" stroke="#282828" stroke-width="1"/></svg>
<div class="t" style="left:1624px;top:211px;color:#e6e6e6">Sun</div>
<svg class="a" style="left:1804px;top:212px" width="16" height="12" viewBox="0 0 16 12"><path d="M1 6Q8 -1 15 6Q8 13 1 6Z" fill="#e6e6e6"/><circle cx="8" cy="6" r="2.8" fill="#282828"/><circle cx="8" cy="6" r="1.2" fill="#e6e6e6"/></svg>
<svg class="a" style="left:1826px;top:211px" width="16" height="14" viewBox="0 0 16 14"><rect x="1" y="1" width="14" height="9" fill="none" stroke="#e6e6e6" stroke-width="1.6"/><path d="M5 13H11M8 10V13" stroke="#e6e6e6" stroke-width="1.4"/></svg>
<svg class="a" style="left:1587px;top:234px" width="8" height="8" viewBox="0 0 8 8"><path d="M1 0.5L7 4L1 7.5Z" fill="#cfcfcf"/></svg>
<svg class="a" style="left:1602px;top:230px" width="16" height="16" viewBox="0 0 16 16"><circle cx="8" cy="6" r="5.5" fill="#d8925a"/><path d="M5.5 12H10.5M6 14.5H10" stroke="#d8925a" stroke-width="1.4"/><path d="M6 6L8 8L10 6" fill="none" stroke="#282828" stroke-width="1"/></svg>
<div class="t" style="left:1624px;top:231px;color:#e6e6e6">Sun.001</div>
<svg class="a" style="left:1804px;top:232px" width="16" height="12" viewBox="0 0 16 12"><path d="M1 6Q8 -1 15 6Q8 13 1 6Z" fill="#e6e6e6"/><circle cx="8" cy="6" r="2.8" fill="#282828"/><circle cx="8" cy="6" r="1.2" fill="#e6e6e6"/></svg>
<svg class="a" style="left:1826px;top:231px" width="16" height="14" viewBox="0 0 16 14"><rect x="1" y="1" width="14" height="9" fill="none" stroke="#e6e6e6" stroke-width="1.6"/><path d="M5 13H11M8 10V13" stroke="#e6e6e6" stroke-width="1.4"/></svg>
<svg class="a" style="left:1587px;top:254px" width="8" height="8" viewBox="0 0 8 8"><path d="M1 0.5L7 4L1 7.5Z" fill="#cfcfcf"/></svg>
<svg class="a" style="left:1602px;top:250px" width="16" height="16" viewBox="0 0 16 16"><circle cx="8" cy="6" r="5.5" fill="#d8925a"/><path d="M5.5 12H10.5M6 14.5H10" stroke="#d8925a" stroke-width="1.4"/><path d="M6 6L8 8L10 6" fill="none" stroke="#282828" stroke-width="1"/></svg>
<div class="t" style="left:1624px;top:251px;color:#e6e6e6">Sun.002</div>
<svg class="a" style="left:1804px;top:252px" width="16" height="12" viewBox="0 0 16 12"><path d="M1 6Q8 -1 15 6Q8 13 1 6Z" fill="#e6e6e6"/><circle cx="8" cy="6" r="2.8" fill="#282828"/><circle cx="8" cy="6" r="1.2" fill="#e6e6e6"/></svg>
<svg class="a" style="left:1826px;top:251px" width="16" height="14" viewBox="0 0 16 14"><rect x="1" y="1" width="14" height="9" fill="none" stroke="#e6e6e6" stroke-width="1.6"/><path d="M5 13H11M8 10V13" stroke="#e6e6e6" stroke-width="1.4"/></svg>
<svg class="a" style="left:1757px;top:9px" width="14" height="14" viewBox="0 0 14 14"><circle cx="7" cy="7" r="6" fill="#d06565"/><path d="M7 7L7 1A6 6 0 0 1 13 7Z" fill="#f0c0c0"/><circle cx="7" cy="7" r="2" fill="#282828"/></svg>
<div class="t" style="left:1771px;top:14px;font-size:9px">3</div>
<div class="a" style="left:1729px;top:28px;width:20px;height:19px;background:#5a5a5a;border-radius:3px"></div>
<svg class="a" style="left:1731px;top:29px" width="16" height="16" viewBox="0 0 16 16"><circle cx="8" cy="3" r="1.8" fill="#6aa8e8"/><path d="M2 5L8 7L14 5M8 7V10L4 15M8 10L12 15" fill="none" stroke="#6aa8e8" stroke-width="1.4"/></svg>
<svg class="a" style="left:1757px;top:50px" width="16" height="16" viewBox="0 0 16 16"><rect x="1.0" y="6.5" width="3.6" height="3.6" fill="#d0d0d0"/><rect x="5.5" y="2.0" width="3.6" height="3.6" fill="#d0d0d0"/><rect x="5.5" y="6.5" width="3.6" height="3.6" fill="#d0d0d0"/><rect x="1.0" y="11.0" width="3.6" height="3.6" fill="#d0d0d0"/><rect x="5.5" y="11.0" width="3.6" height="3.6" fill="#d0d0d0"/><rect x="10.5" y="2.5" width="2.8" height="2.8" fill="none" stroke="#d0d0d0" stroke-width="0.9"/><rect x="10.5" y="7.0" width="2.8" height="2.8" fill="none" stroke="#d0d0d0" stroke-width="0.9"/><rect x="10.5" y="11.5" width="2.8" height="2.8" fill="none" stroke="#d0d0d0" stroke-width="0.9"/></svg>
<div class="t" style="left:1771px;top:54px;font-size:9px">46</div>
<svg class="a" style="left:1737px;top:70px" width="16" height="16" viewBox="0 0 16 16"><path d="M3 14L9 8M9 8A3.5 3.5 0 1 0 12 3.5L10.5 5.5" fill="none" stroke="#5f8ad8" stroke-width="1.8" stroke-linecap="round"/></svg>
<svg class="a" style="left:1757px;top:70px" width="16" height="16" viewBox="0 0 16 16"><rect x="1.0" y="6.5" width="3.6" height="3.6" fill="#d0d0d0"/><rect x="5.5" y="2.0" width="3.6" height="3.6" fill="#d0d0d0"/><rect x="5.5" y="6.5" width="3.6" height="3.6" fill="#d0d0d0"/><rect x="1.0" y="11.0" width="3.6" height="3.6" fill="#d0d0d0"/><rect x="5.5" y="11.0" width="3.6" height="3.6" fill="#d0d0d0"/><rect x="10.5" y="2.5" width="2.8" height="2.8" fill="none" stroke="#d0d0d0" stroke-width="0.9"/><rect x="10.5" y="7.0" width="2.8" height="2.8" fill="none" stroke="#d0d0d0" stroke-width="0.9"/><rect x="10.5" y="11.5" width="2.8" height="2.8" fill="none" stroke="#d0d0d0" stroke-width="0.9"/></svg>
<div class="t" style="left:1778px;top:68px;font-size:9px;color:#3fbf8a">ʕ</div>
<svg class="a" style="left:1700px;top:90px" width="16" height="16" viewBox="0 0 16 16"><path d="M3 3L13 3L8 13Z" fill="none" stroke="#3fbf8a" stroke-width="1.2"/><rect x="1" y="1" width="4" height="4" fill="#282828" stroke="#3fbf8a" stroke-width="1.2"/><rect x="11" y="1" width="4" height="4" fill="#282828" stroke="#3fbf8a" stroke-width="1.2"/><rect x="6" y="11" width="4" height="4" fill="#282828" stroke="#3fbf8a" stroke-width="1.2"/></svg>
<svg class="a" style="left:1723px;top:110px" width="16" height="16" viewBox="0 0 16 16"><rect x="1.0" y="6.5" width="3.6" height="3.6" fill="#d0d0d0"/><rect x="5.5" y="2.0" width="3.6" height="3.6" fill="#d0d0d0"/><rect x="5.5" y="6.5" width="3.6" height="3.6" fill="#d0d0d0"/><rect x="1.0" y="11.0" width="3.6" height="3.6" fill="#d0d0d0"/><rect x="5.5" y="11.0" width="3.6" height="3.6" fill="#d0d0d0"/><rect x="10.5" y="2.5" width="2.8" height="2.8" fill="none" stroke="#d0d0d0" stroke-width="0.9"/><rect x="10.5" y="7.0" width="2.8" height="2.8" fill="none" stroke="#d0d0d0" stroke-width="0.9"/><rect x="10.5" y="11.5" width="2.8" height="2.8" fill="none" stroke="#d0d0d0" stroke-width="0.9"/></svg>
<svg class="a" style="left:1744px;top:110px" width="16" height="16" viewBox="0 0 16 16"><path d="M3 3L13 3L8 13Z" fill="none" stroke="#3fbf8a" stroke-width="1.2"/><rect x="1" y="1" width="4" height="4" fill="#282828" stroke="#3fbf8a" stroke-width="1.2"/><rect x="11" y="1" width="4" height="4" fill="#282828" stroke="#3fbf8a" stroke-width="1.2"/><rect x="6" y="11" width="4" height="4" fill="#282828" stroke="#3fbf8a" stroke-width="1.2"/></svg>
<svg class="a" style="left:1723px;top:130px" width="16" height="16" viewBox="0 0 16 16"><rect x="1.0" y="6.5" width="3.6" height="3.6" fill="#d0d0d0"/><rect x="5.5" y="2.0" width="3.6" height="3.6" fill="#d0d0d0"/><rect x="5.5" y="6.5" width="3.6" height="3.6" fill="#d0d0d0"/><rect x="1.0" y="11.0" width="3.6" height="3.6" fill="#d0d0d0"/><rect x="5.5" y="11.0" width="3.6" height="3.6" fill="#d0d0d0"/><rect x="10.5" y="2.5" width="2.8" height="2.8" fill="none" stroke="#d0d0d0" stroke-width="0.9"/><rect x="10.5" y="7.0" width="2.8" height="2.8" fill="none" stroke="#d0d0d0" stroke-width="0.9"/><rect x="10.5" y="11.5" width="2.8" height="2.8" fill="none" stroke="#d0d0d0" stroke-width="0.9"/></svg>
<svg class="a" style="left:1744px;top:130px" width="16" height="16" viewBox="0 0 16 16"><path d="M3 3L13 3L8 13Z" fill="none" stroke="#3fbf8a" stroke-width="1.2"/><rect x="1" y="1" width="4" height="4" fill="#282828" stroke="#3fbf8a" stroke-width="1.2"/><rect x="11" y="1" width="4" height="4" fill="#282828" stroke="#3fbf8a" stroke-width="1.2"/><rect x="6" y="11" width="4" height="4" fill="#282828" stroke="#3fbf8a" stroke-width="1.2"/></svg>
<svg class="a" style="left:1716px;top:150px" width="16" height="16" viewBox="0 0 16 16"><rect x="1.0" y="6.5" width="3.6" height="3.6" fill="#d0d0d0"/><rect x="5.5" y="2.0" width="3.6" height="3.6" fill="#d0d0d0"/><rect x="5.5" y="6.5" width="3.6" height="3.6" fill="#d0d0d0"/><rect x="1.0" y="11.0" width="3.6" height="3.6" fill="#d0d0d0"/><rect x="5.5" y="11.0" width="3.6" height="3.6" fill="#d0d0d0"/><rect x="10.5" y="2.5" width="2.8" height="2.8" fill="none" stroke="#d0d0d0" stroke-width="0.9"/><rect x="10.5" y="7.0" width="2.8" height="2.8" fill="none" stroke="#d0d0d0" stroke-width="0.9"/><rect x="10.5" y="11.5" width="2.8" height="2.8" fill="none" stroke="#d0d0d0" stroke-width="0.9"/></svg>
<svg class="a" style="left:1737px;top:150px" width="16" height="16" viewBox="0 0 16 16"><path d="M3 3L13 3L8 13Z" fill="none" stroke="#3fbf8a" stroke-width="1.2"/><rect x="1" y="1" width="4" height="4" fill="#282828" stroke="#3fbf8a" stroke-width="1.2"/><rect x="11" y="1" width="4" height="4" fill="#282828" stroke="#3fbf8a" stroke-width="1.2"/><rect x="6" y="11" width="4" height="4" fill="#282828" stroke="#3fbf8a" stroke-width="1.2"/></svg>
<div class="a" style="left:1683px;top:169px;width:20px;height:18px;background:#5a7aa0;border-radius:3px"></div>
<svg class="a" style="left:1684px;top:170px" width="18" height="16" viewBox="0 0 18 16"><circle cx="5" cy="4.5" r="3.5" fill="#3fbfa0"/><circle cx="11.5" cy="4.5" r="3.5" fill="#3fbfa0"/><circle cx="5" cy="4.5" r="1.2" fill="#282828"/><circle cx="11.5" cy="4.5" r="1.2" fill="#282828"/><rect x="3" y="8.5" width="10" height="6" fill="#3fbfa0"/><path d="M13 11.5L17 9V14.5Z" fill="#3fbfa0"/></svg>
<svg class="a" style="left:1682px;top:190px" width="16" height="16" viewBox="0 0 16 16"><path d="M3 14L9 8M9 8A3.5 3.5 0 1 0 12 3.5L10.5 5.5" fill="none" stroke="#5f8ad8" stroke-width="1.8" stroke-linecap="round"/></svg>
<svg class="a" style="left:1704px;top:190px" width="16" height="16" viewBox="0 0 16 16"><path d="M2 13Q2 6 7 8Q12 10 13 3" fill="none" stroke="#3fbf8a" stroke-width="1.4"/><circle cx="3" cy="12" r="2" fill="none" stroke="#3fbf8a" stroke-width="1.2"/><circle cx="12" cy="4" r="2" fill="none" stroke="#3fbf8a" stroke-width="1.2"/></svg>
<svg class="a" style="left:1664px;top:210px" width="16" height="16" viewBox="0 0 16 16"><circle cx="8" cy="8" r="3" fill="none" stroke="#3fbf8a" stroke-width="1.4"/><path d="M8 1V3.5M8 12.5V15M1 8H3.5M12.5 8H15M3 3L4.8 4.8M11.2 11.2L13 13M13 3L11.2 4.8M4.8 11.2L3 13" stroke="#3fbf8a" stroke-width="1.3"/></svg>
<svg class="a" style="left:1688px;top:230px" width="16" height="16" viewBox="0 0 16 16"><path d="M4 2L12 4L13 14L3 12Z" fill="none" stroke="#3fbf8a" stroke-width="1.3"/><circle cx="9" cy="8" r="1.2" fill="#3fbf8a"/></svg>
<svg class="a" style="left:1687px;top:250px" width="16" height="16" viewBox="0 0 16 16"><circle cx="8" cy="8" r="3" fill="none" stroke="#3fbf8a" stroke-width="1.4"/><path d="M8 1V3.5M8 12.5V15M1 8H3.5M12.5 8H15M3 3L4.8 4.8M11.2 11.2L13 13M13 3L11.2 4.8M4.8 11.2L3 13" stroke="#3fbf8a" stroke-width="1.3"/></svg>
<div class="a" style="left:1548px;top:253px;width:287px;height:3px;background:#3c3c3c;border-radius:2px"></div>
<div class="a" style="left:1540px;top:258px;width:295px;height:3px;background:#1a1a1a"></div>
<div class="a" style="left:1540px;top:261px;width:295px;height:617px;background:#2e2e2e"></div>
<div class="a" style="left:1540px;top:261px;width:295px;height:25px;background:#2b2b2b"></div>
<div class="a" style="left:1549px;top:264px;width:30px;height:19px;background:#252525;border-radius:3px"></div>
<svg class="a" style="left:1552px;top:266px" width="26" height="15" viewBox="0 0 26 15"><rect x="0.5" y="0.5" width="13" height="6" rx="3" fill="#e0e0e0"/><rect x="0.5" y="8" width="13" height="6" rx="3" fill="#e0e0e0"/><rect x="7" y="2" width="5" height="3" rx="1.5" fill="#252525"/><rect x="7" y="9.5" width="5" height="3" rx="1.5" fill="#252525"/><path d="M17 6L19.5 8.5L22 6" fill="none" stroke="#d0d0d0" stroke-width="1.1"/></svg>
<div class="a" style="left:1652px;top:264px;width:110px;height:19px;background:#1e1e1e;border-radius:4px"></div>
<svg class="a" style="left:1656px;top:265px" width="16" height="16" viewBox="0 0 16 16"><circle cx="9.5" cy="6" r="4.3" fill="none" stroke="#e0e0e0" stroke-width="1.3"/><path d="M6.5 9L2 13.5" stroke="#e0e0e0" stroke-width="1.4"/></svg>
<div class="a" style="left:1540px;top:286px;width:28px;height:592px;background:#1f1f1f"></div>
<div class="a" style="left:1543px;top:515px;width:25px;height:27px;background:#2e2e2e;border-radius:4px 0 0 4px"></div>
<svg class="a" style="left:1547px;top:299px" width="16" height="16" viewBox="0 0 16 16"><path d="M4 2V6M4 9V13" stroke="#ddd" stroke-width="1.2"/><circle cx="4" cy="12" r="2.3" fill="#ddd"/><path d="M11 14V7M8.5 2.5V5.5Q11 8 13.5 5.5V2.5" fill="none" stroke="#ddd" stroke-width="1.8"/></svg>
<svg class="a" style="left:1547px;top:334px" width="16" height="16" viewBox="0 0 16 16"><rect x="2" y="5" width="12" height="8" fill="none" stroke="#ddd" stroke-width="1.4"/><rect x="4" y="2" width="6" height="3" fill="#ddd"/><path d="M11 8H13M11 10H13" stroke="#ddd"/></svg>
<svg class="a" style="left:1547px;top:363px" width="16" height="16" viewBox="0 0 16 16"><rect x="2" y="2" width="12" height="4" fill="#ddd"/><rect x="4" y="6" width="8" height="8" fill="none" stroke="#ddd" stroke-width="1.4"/><path d="M5 13L8 9L11 13Z" fill="#ddd"/></svg>
<svg class="a" style="left:1547px;top:391px" width="16" height="16" viewBox="0 0 16 16"><rect x="5" y="2" width="9" height="9" fill="none" stroke="#ddd" stroke-width="1.2"/><path d="M3 4V13H12" fill="none" stroke="#ddd" stroke-width="1.2"/><path d="M1 6V15H10" fill="none" stroke="#ddd" stroke-width="1"/><path d="M6 10L9 6L13 10Z" fill="#ddd"/></svg>
<svg class="a" style="left:1547px;top:418px" width="16" height="16" viewBox="0 0 16 16"><path d="M5 2L8 8A3 3 0 0 1 2 8Z" fill="#ddd"/><circle cx="11" cy="11" r="3.5" fill="none" stroke="#ddd" stroke-width="1.2"/><circle cx="12" cy="4" r="1.5" fill="#ddd"/></svg>
<svg class="a" style="left:1547px;top:447px" width="16" height="16" viewBox="0 0 16 16"><circle cx="8" cy="8" r="6" fill="#a04545"/><path d="M4 5Q8 6 7 9Q5 11 6 13M10 3Q9 6 12 7Q14 9 12 12" fill="none" stroke="#2a2a2a" stroke-width="1.2"/></svg>
<svg class="a" style="left:1547px;top:484px" width="16" height="16" viewBox="0 0 16 16"><rect x="2" y="3" width="12" height="3" fill="none" stroke="#ddd" stroke-width="1.3"/><rect x="3" y="6" width="10" height="8" fill="none" stroke="#ddd" stroke-width="1.3"/><path d="M6 9H10" stroke="#ddd" stroke-width="1.3"/></svg>
<svg class="a" style="left:1547px;top:520px" width="16" height="16" viewBox="0 0 16 16"><path d="M1.5 5V1.5H5M11 1.5H14.5V5M14.5 11V14.5H11M5 14.5H1.5V11" fill="none" stroke="#e8964e" stroke-width="1.3"/><rect x="4" y="4" width="8" height="8" fill="#e8a46e"/></svg>
<svg class="a" style="left:1547px;top:548px" width="16" height="16" viewBox="0 0 16 16"><circle cx="7.5" cy="8.5" r="5.5" fill="none" stroke="#5a8ad8" stroke-width="1.6"/><circle cx="7.5" cy="8.5" r="2.2" fill="#ddd"/><circle cx="12" cy="4" r="1.8" fill="#ddd"/></svg>
<svg class="a" style="left:1547px;top:576px" width="16" height="16" viewBox="0 0 16 16"><ellipse cx="8" cy="9" rx="6" ry="4" transform="rotate(-35 8 9)" fill="none" stroke="#5a8ad8" stroke-width="1.8"/><circle cx="7" cy="10" r="2" fill="none" stroke="#5a8ad8" stroke-width="1.4"/><circle cx="12" cy="4" r="1.5" fill="#ddd"/></svg>
<svg class="a" style="left:1547px;top:603px" width="16" height="16" viewBox="0 0 16 16"><circle cx="11" cy="2.5" r="1.8" fill="#3fbf8a"/><path d="M3 6L8 5L11 6L8 10L12 14M8 10L3 13M11 6L14 8" fill="none" stroke="#3fbf8a" stroke-width="1.5"/></svg>
<svg class="a" style="left:1547px;top:632px" width="16" height="16" viewBox="0 0 16 16"><path d="M4 12L12 4" stroke="#3fbf8a" stroke-width="3"/><circle cx="3" cy="11" r="2" fill="#3fbf8a"/><circle cx="5" cy="13" r="2" fill="#3fbf8a"/><circle cx="11" cy="3" r="2" fill="#3fbf8a"/><circle cx="13" cy="5" r="2" fill="#3fbf8a"/></svg>
<svg class="a" style="left:1547px;top:660px" width="16" height="16" viewBox="0 0 16 16"><path d="M4 12L12 4" stroke="#5a8ad8" stroke-width="2.5"/><circle cx="4" cy="4" r="3" fill="none" stroke="#5a8ad8" stroke-width="1.3"/><path d="M2 10L6 14M10 14L14 10" stroke="#ddd" stroke-width="1.2"/></svg>
<svg class="a" style="left:1547px;top:696px" width="16" height="16" viewBox="0 0 16 16"><rect x="2" y="2" width="12" height="12" fill="#7a3a3a"/><path d="M2 2H5V5H2ZM8 2H11V5H8ZM5 5H8V8H5ZM11 5H14V8H11ZM2 8H5V11H2ZM8 8H11V11H8ZM5 11H8V14H5ZM11 11H14V14H11Z" fill="#d08080"/></svg>
<svg class="a" style="left:1579px;top:296px" width="15" height="15" viewBox="0 0 15 15"><path d="M1 4.5V1H4.5M10.5 1H14V4.5M14 10.5V14H10.5M4.5 14H1V10.5" fill="none" stroke="#d0d0d0" stroke-width="1.1"/><rect x="4" y="4" width="7" height="7" fill="#e6e6e6"/></svg>
<div class="t" style="left:1602px;top:297px">Armature</div>
<div class="a" style="left:1577px;top:331px;width:31px;height:18px;background:#282828;border-radius:3px 0 0 3px"></div>
<svg class="a" style="left:1580px;top:332px" width="15" height="15" viewBox="0 0 15 15"><path d="M1 4.5V1H4.5M10.5 1H14V4.5M14 10.5V14H10.5M4.5 14H1V10.5" fill="none" stroke="#d0d0d0" stroke-width="1.1"/><rect x="4" y="4" width="7" height="7" fill="#e6e6e6"/></svg>
<svg class="a" style="left:1596px;top:337px" width="10" height="6" viewBox="0 0 10 6"><path d="M1 1L5 5L9 1" fill="none" stroke="#d0d0d0" stroke-width="1.2"/></svg>
<div class="a" style="left:1608px;top:331px;width:227px;height:18px;background:#1d1d1d"></div>
<div class="t" style="left:1615px;top:333px">Armature</div>
<div class="a" style="left:1576px;top:361px;width:259px;height:279px;background:#3a3a3a;border-radius:4px 0 0 4px"></div>
<svg class="a" style="left:1584px;top:370px" width="10" height="6" viewBox="0 0 10 6"><path d="M1 1L5 5L9 1" fill="none" stroke="#bdbdbd" stroke-width="1.2"/></svg>
<div class="t" style="left:1598px;top:366px">Transform</div>
<div class="t" style="right:154px;top:396.0px">Location X</div><div class="a" style="left:1690px;top:394.0px;width:125px;height:19.5px;background:#545454;border-radius:3px 3px 0 0"></div><div class="t n" style="left:1690px;top:396.0px;width:125px;text-align:center">0 m</div><div class="a" style="left:1819px;top:397.0px"><svg width="14" height="12" viewBox="0 0 14 12"><path d="M2.5 5.5V3.5A3 3 0 0 1 8.5 3.5" fill="none" stroke="#cfcfcf" stroke-width="1.1"/><rect x="5.5" y="5.5" width="8" height="6" fill="none" stroke="#cfcfcf" stroke-width="1.1"/><rect x="8.5" y="8" width="2" height="1.5" fill="#cfcfcf"/></svg></div>
<div class="t" style="right:154px;top:415.5px">Y</div><div class="a" style="left:1690px;top:413.5px;width:125px;height:19.5px;background:#545454;border-radius:0"></div><div class="a" style="left:1690px;top:413.0px;width:125px;height:1px;background:#404040"></div><div class="t n" style="left:1690px;top:415.5px;width:125px;text-align:center">0 m</div><div class="a" style="left:1819px;top:416.5px"><svg width="14" height="12" viewBox="0 0 14 12"><path d="M2.5 5.5V3.5A3 3 0 0 1 8.5 3.5" fill="none" stroke="#cfcfcf" stroke-width="1.1"/><rect x="5.5" y="5.5" width="8" height="6" fill="none" stroke="#cfcfcf" stroke-width="1.1"/><rect x="8.5" y="8" width="2" height="1.5" fill="#cfcfcf"/></svg></div>
<div class="t" style="right:154px;top:435.0px">Z</div><div class="a" style="left:1690px;top:433.0px;width:125px;height:19px;background:#545454;border-radius:0 0 3px 3px"></div><div class="a" style="left:1690px;top:432.5px;width:125px;height:1px;background:#404040"></div><div class="t n" style="left:1690px;top:435.0px;width:125px;text-align:center">0 m</div><div class="a" style="left:1819px;top:436.0px"><svg width="14" height="12" viewBox="0 0 14 12"><path d="M2.5 5.5V3.5A3 3 0 0 1 8.5 3.5" fill="none" stroke="#cfcfcf" stroke-width="1.1"/><rect x="5.5" y="5.5" width="8" height="6" fill="none" stroke="#cfcfcf" stroke-width="1.1"/><rect x="8.5" y="8" width="2" height="1.5" fill="#cfcfcf"/></svg></div>
<div class="t" style="right:154px;top:461.0px">Rotation X</div><div class="a" style="left:1690px;top:459.0px;width:125px;height:19.5px;background:#545454;border-radius:3px 3px 0 0"></div><div class="t n" style="left:1690px;top:461.0px;width:125px;text-align:center">0°</div><div class="a" style="left:1819px;top:462.0px"><svg width="14" height="12" viewBox="0 0 14 12"><path d="M2.5 5.5V3.5A3 3 0 0 1 8.5 3.5" fill="none" stroke="#cfcfcf" stroke-width="1.1"/><rect x="5.5" y="5.5" width="8" height="6" fill="none" stroke="#cfcfcf" stroke-width="1.1"/><rect x="8.5" y="8" width="2" height="1.5" fill="#cfcfcf"/></svg></div>
<div class="t" style="right:154px;top:480.5px">Y</div><div class="a" style="left:1690px;top:478.5px;width:125px;height:19.5px;background:#545454;border-radius:0"></div><div class="a" style="left:1690px;top:478.0px;width:125px;height:1px;background:#404040"></div><div class="t n" style="left:1690px;top:480.5px;width:125px;text-align:center">0°</div><div class="a" style="left:1819px;top:481.5px"><svg width="14" height="12" viewBox="0 0 14 12"><path d="M2.5 5.5V3.5A3 3 0 0 1 8.5 3.5" fill="none" stroke="#cfcfcf" stroke-width="1.1"/><rect x="5.5" y="5.5" width="8" height="6" fill="none" stroke="#cfcfcf" stroke-width="1.1"/><rect x="8.5" y="8" width="2" height="1.5" fill="#cfcfcf"/></svg></div>
<div class="t" style="right:154px;top:500.0px">Z</div><div class="a" style="left:1690px;top:498.0px;width:125px;height:19px;background:#545454;border-radius:0 0 3px 3px"></div><div class="a" style="left:1690px;top:497.5px;width:125px;height:1px;background:#404040"></div><div class="t n" style="left:1690px;top:500.0px;width:125px;text-align:center">0°</div><div class="a" style="left:1819px;top:501.0px"><svg width="14" height="12" viewBox="0 0 14 12"><path d="M2.5 5.5V3.5A3 3 0 0 1 8.5 3.5" fill="none" stroke="#cfcfcf" stroke-width="1.1"/><rect x="5.5" y="5.5" width="8" height="6" fill="none" stroke="#cfcfcf" stroke-width="1.1"/><rect x="8.5" y="8" width="2" height="1.5" fill="#cfcfcf"/></svg></div>
<div class="t" style="right:154px;top:526px">Mode</div>
<div class="a" style="left:1690px;top:524px;width:125px;height:18px;background:#282828;border-radius:3px"></div>
<div class="t" style="left:1697px;top:526px">XYZ Euler</div>
<svg class="a" style="left:1803px;top:531px" width="10" height="6" viewBox="0 0 10 6"><path d="M1 1L5 5L9 1" fill="none" stroke="#d0d0d0" stroke-width="1.2"/></svg>
<div class="t" style="right:154px;top:551.0px">Scale X</div><div class="a" style="left:1690px;top:549.0px;width:125px;height:19.5px;background:#545454;border-radius:3px 3px 0 0"></div><div class="t n" style="left:1690px;top:551.0px;width:125px;text-align:center">1.000</div><div class="a" style="left:1819px;top:552.0px"><svg width="14" height="12" viewBox="0 0 14 12"><path d="M2.5 5.5V3.5A3 3 0 0 1 8.5 3.5" fill="none" stroke="#cfcfcf" stroke-width="1.1"/><rect x="5.5" y="5.5" width="8" height="6" fill="none" stroke="#cfcfcf" stroke-width="1.1"/><rect x="8.5" y="8" width="2" height="1.5" fill="#cfcfcf"/></svg></div>
<div class="t" style="right:154px;top:570.5px">Y</div><div class="a" style="left:1690px;top:568.5px;width:125px;height:19.5px;background:#545454;border-radius:0"></div><div class="a" style="left:1690px;top:568.0px;width:125px;height:1px;background:#404040"></div><div class="t n" style="left:1690px;top:570.5px;width:125px;text-align:center">1.000</div><div class="a" style="left:1819px;top:571.5px"><svg width="14" height="12" viewBox="0 0 14 12"><path d="M2.5 5.5V3.5A3 3 0 0 1 8.5 3.5" fill="none" stroke="#cfcfcf" stroke-width="1.1"/><rect x="5.5" y="5.5" width="8" height="6" fill="none" stroke="#cfcfcf" stroke-width="1.1"/><rect x="8.5" y="8" width="2" height="1.5" fill="#cfcfcf"/></svg></div>
<div class="t" style="right:154px;top:590.0px">Z</div><div class="a" style="left:1690px;top:588.0px;width:125px;height:19px;background:#545454;border-radius:0 0 3px 3px"></div><div class="a" style="left:1690px;top:587.5px;width:125px;height:1px;background:#404040"></div><div class="t n" style="left:1690px;top:590.0px;width:125px;text-align:center">1.000</div><div class="a" style="left:1819px;top:591.0px"><svg width="14" height="12" viewBox="0 0 14 12"><path d="M2.5 5.5V3.5A3 3 0 0 1 8.5 3.5" fill="none" stroke="#cfcfcf" stroke-width="1.1"/><rect x="5.5" y="5.5" width="8" height="6" fill="none" stroke="#cfcfcf" stroke-width="1.1"/><rect x="8.5" y="8" width="2" height="1.5" fill="#cfcfcf"/></svg></div>
<svg class="a" style="left:1601px;top:624px" width="6" height="10" viewBox="0 0 6 10"><path d="M1 1L5 5L1 9" fill="none" stroke="#bdbdbd" stroke-width="1.2"/></svg>
<div class="t" style="left:1612px;top:622px">Delta Transform</div>
<div class="a" style="left:1576px;top:644px;width:259px;height:24px;background:#3a3a3a;border-radius:4px 0 0 4px"></div>
<svg class="a" style="left:1587px;top:651px" width="6" height="10" viewBox="0 0 6 10"><path d="M1 1L5 5L1 9" fill="none" stroke="#bdbdbd" stroke-width="1.2"/></svg>
<div class="t" style="left:1598px;top:649px">Relations</div>
<div class="a" style="left:1576px;top:671px;width:259px;height:24px;background:#3a3a3a;border-radius:4px 0 0 4px"></div>
<svg class="a" style="left:1587px;top:678px" width="6" height="10" viewBox="0 0 6 10"><path d="M1 1L5 5L1 9" fill="none" stroke="#bdbdbd" stroke-width="1.2"/></svg>
<div class="t" style="left:1598px;top:676px">Collections</div>
<div class="a" style="left:1576px;top:698px;width:259px;height:24px;background:#3a3a3a;border-radius:4px 0 0 4px"></div>
<svg class="a" style="left:1587px;top:705px" width="6" height="10" viewBox="0 0 6 10"><path d="M1 1L5 5L1 9" fill="none" stroke="#bdbdbd" stroke-width="1.2"/></svg>
<div class="t" style="left:1598px;top:703px">Motion Paths</div>
<div class="a" style="left:1576px;top:725px;width:259px;height:24px;background:#3a3a3a;border-radius:4px 0 0 4px"></div>
<svg class="a" style="left:1587px;top:732px" width="6" height="10" viewBox="0 0 6 10"><path d="M1 1L5 5L1 9" fill="none" stroke="#bdbdbd" stroke-width="1.2"/></svg>
<div class="t" style="left:1598px;top:730px">Visibility</div>
<div class="a" style="left:1576px;top:752px;width:259px;height:24px;background:#3a3a3a;border-radius:4px 0 0 4px"></div>
<svg class="a" style="left:1587px;top:759px" width="6" height="10" viewBox="0 0 6 10"><path d="M1 1L5 5L1 9" fill="none" stroke="#bdbdbd" stroke-width="1.2"/></svg>
<div class="t" style="left:1598px;top:757px">Viewport Display</div>
<div class="a" style="left:1576px;top:779px;width:259px;height:24px;background:#3a3a3a;border-radius:4px 0 0 4px"></div>
<svg class="a" style="left:1587px;top:786px" width="6" height="10" viewBox="0 0 6 10"><path d="M1 1L5 5L1 9" fill="none" stroke="#bdbdbd" stroke-width="1.2"/></svg>
<div class="t" style="left:1598px;top:784px">Custom Properties</div>
<div class="a" style="left:0;top:816px;width:1537px;height:3px;background:#131a1e"></div>
<div class="a" style="left:0;top:819px;width:1537px;height:24px;background:#2e2e2e"></div>
<div class="a" style="left:0;top:843px;width:1537px;height:23px;background:#1f1f1f"></div>
<div class="a" style="left:0;top:866px;width:1537px;height:12px;background:#2a2a2a"></div>
<div class="a" style="left:0;top:822px;width:126px;height:20px;background:#282828;border-radius:0 4px 4px 0"></div>
<div class="a" style="left:66px;top:822px;width:1px;height:20px;background:#3a3a3a"></div>
<div class="t" style="left:5px;top:825px">Playback</div>
<svg class="a" style="left:54px;top:831px" width="10" height="6" viewBox="0 0 10 6"><path d="M1 1L5 5L9 1" fill="none" stroke="#cfcfcf" stroke-width="1.2"/></svg>
<div class="t" style="left:74px;top:825px">Keying</div>
<svg class="a" style="left:114px;top:831px" width="10" height="6" viewBox="0 0 10 6"><path d="M1 1L5 5L9 1" fill="none" stroke="#cfcfcf" stroke-width="1.2"/></svg>
<div class="t" style="left:135px;top:825px">View</div>
<div class="t" style="left:175px;top:825px">Marker</div>
<div class="a" style="left:652px;top:823px;width:38px;height:17px;background:#3a3a3a;border-radius:4px"></div>
<div class="a" style="left:652px;top:823px;width:19px;height:17px;background:#545454;border-radius:4px 0 0 4px"></div>
<div class="a" style="left:657px;top:826px;width:10px;height:10px;background:#e6e6e6;border-radius:50%"></div>
<svg class="a" style="left:676px;top:829px" width="10" height="6" viewBox="0 0 10 6"><path d="M1 1L5 5L9 1" fill="none" stroke="#666" stroke-width="1.2"/></svg>
<div class="a" style="left:697px;top:823px;width:119px;height:17px;background:#545454;border-radius:4px"></div>
<div class="a" style="left:717px;top:823px;width:1px;height:17px;background:#4a4a4a"></div>
<div class="a" style="left:737px;top:823px;width:1px;height:17px;background:#4a4a4a"></div>
<div class="a" style="left:757px;top:823px;width:1px;height:17px;background:#4a4a4a"></div>
<div class="a" style="left:777px;top:823px;width:1px;height:17px;background:#4a4a4a"></div>
<div class="a" style="left:797px;top:823px;width:1px;height:17px;background:#4a4a4a"></div>
<svg class="a" style="left:697px;top:823px" width="120" height="17" viewBox="0 0 120 17">
<path d="M5 3V14H7V3ZM8 8.5L14 3V14Z" fill="#e6e6e6"/>
<path d="M23 8.5L27 4.5L31 8.5L27 12.5ZM31 8.5L36 4V13Z" fill="#e6e6e6"/>
<path d="M43 8.5L51 3V14Z" fill="#e6e6e6"/>
<path d="M64 3L72 8.5L64 14Z" fill="#e6e6e6"/>
<path d="M83 4V13L88 8.5ZM88 8.5L92 4.5L96 8.5L92 12.5Z" fill="#e6e6e6"/>
<path d="M104 3L110 8.5L104 14ZM111 3H113V14H111Z" fill="#e6e6e6"/>
</svg>
<div class="a" style="left:1139px;top:823px;width:74px;height:18px;background:#545454;border-radius:4px"></div>
<div class="t" style="left:1139px;top:825px;width:74px;text-align:center">8</div>
<div class="a" style="left:1219px;top:823px;width:191px;height:18px;background:#545454;border-radius:4px"></div>
<div class="a" style="left:1219px;top:823px;width:20px;height:18px;background:#3d3d3d;border-radius:4px 0 0 4px"></div>
<svg class="a" style="left:1221px;top:824px" width="16" height="16" viewBox="0 0 16 16"><circle cx="8" cy="9" r="5.5" fill="none" stroke="#d0d0d0" stroke-width="1.3"/><path d="M8 9V6M6 2H10M12 4L13.5 5.5" stroke="#d0d0d0" stroke-width="1.2"/></svg>
<div class="a" style="left:1326px;top:823px;width:1px;height:18px;background:#3d3d3d"></div>
<div class="t" style="left:1254px;top:825px">Start</div><div class="t" style="left:1305px;top:825px">1</div>
<div class="t" style="left:1342px;top:825px">End</div><div class="t" style="left:1376px;top:825px">250</div>
<div class="a" style="left:1416px;top:823px;width:113px;height:18px;background:#3a3a3a;border-radius:4px"></div>
<svg class="a" style="left:1420px;top:824px" width="16" height="16" viewBox="0 0 16 16"><circle cx="8" cy="9" r="5.5" fill="none" stroke="#777" stroke-width="1.3"/><path d="M8 9V6M6 2H10" stroke="#777" stroke-width="1.2"/></svg>
<div class="t" style="left:1441px;top:825px;color:#8a8a8a">To Scene Range</div>
<div class="t n" style="left:-25.0px;top:848px;width:60px;text-align:center;color:#cfcfcf">0</div>
<div class="t n" style="left:92.8px;top:848px;width:60px;text-align:center;color:#cfcfcf">20</div>
<div class="t n" style="left:151.7px;top:848px;width:60px;text-align:center;color:#cfcfcf">30</div>
<div class="t n" style="left:210.6px;top:848px;width:60px;text-align:center;color:#cfcfcf">40</div>
<div class="t n" style="left:269.5px;top:848px;width:60px;text-align:center;color:#cfcfcf">50</div>
<div class="t n" style="left:328.4px;top:848px;width:60px;text-align:center;color:#cfcfcf">60</div>
<div class="t n" style="left:387.3px;top:848px;width:60px;text-align:center;color:#cfcfcf">70</div>
<div class="t n" style="left:446.2px;top:848px;width:60px;text-align:center;color:#cfcfcf">80</div>
<div class="t n" style="left:505.1px;top:848px;width:60px;text-align:center;color:#cfcfcf">90</div>
<div class="t n" style="left:564.0px;top:848px;width:60px;text-align:center;color:#cfcfcf">100</div>
<div class="t n" style="left:622.9px;top:848px;width:60px;text-align:center;color:#cfcfcf">110</div>
<div class="t n" style="left:681.8px;top:848px;width:60px;text-align:center;color:#cfcfcf">120</div>
<div class="t n" style="left:740.7px;top:848px;width:60px;text-align:center;color:#cfcfcf">130</div>
<div class="t n" style="left:799.6px;top:848px;width:60px;text-align:center;color:#cfcfcf">140</div>
<div class="t n" style="left:858.5px;top:848px;width:60px;text-align:center;color:#cfcfcf">150</div>
<div class="t n" style="left:917.4px;top:848px;width:60px;text-align:center;color:#cfcfcf">160</div>
<div class="t n" style="left:976.3px;top:848px;width:60px;text-align:center;color:#cfcfcf">170</div>
<div class="t n" style="left:1035.2px;top:848px;width:60px;text-align:center;color:#cfcfcf">180</div>
<div class="t n" style="left:1094.1px;top:848px;width:60px;text-align:center;color:#cfcfcf">190</div>
<div class="t n" style="left:1153.0px;top:848px;width:60px;text-align:center;color:#cfcfcf">200</div>
<div class="t n" style="left:1211.9px;top:848px;width:60px;text-align:center;color:#cfcfcf">210</div>
<div class="t n" style="left:1270.8px;top:848px;width:60px;text-align:center;color:#cfcfcf">220</div>
<div class="t n" style="left:1329.7px;top:848px;width:60px;text-align:center;color:#cfcfcf">230</div>
<div class="t n" style="left:1388.6px;top:848px;width:60px;text-align:center;color:#cfcfcf">240</div>
<div class="t n" style="left:1447.5px;top:848px;width:60px;text-align:center;color:#cfcfcf">250</div>
<div class="t" style="left:64px;top:848px;color:#cfcfcf">0</div>
<div class="a" style="left:5px;top:866px;width:1px;height:12px;background:#1a1a1a"></div>
<div class="a" style="left:34px;top:866px;width:1px;height:12px;background:#262626"></div>
<div class="a" style="left:64px;top:866px;width:1px;height:12px;background:#1a1a1a"></div>
<div class="a" style="left:93px;top:866px;width:1px;height:12px;background:#262626"></div>
<div class="a" style="left:123px;top:866px;width:1px;height:12px;background:#1a1a1a"></div>
<div class="a" style="left:152px;top:866px;width:1px;height:12px;background:#262626"></div>
<div class="a" style="left:182px;top:866px;width:1px;height:12px;background:#1a1a1a"></div>
<div class="a" style="left:211px;top:866px;width:1px;height:12px;background:#262626"></div>
<div class="a" style="left:241px;top:866px;width:1px;height:12px;background:#1a1a1a"></div>
<div class="a" style="left:270px;top:866px;width:1px;height:12px;background:#262626"></div>
<div class="a" style="left:300px;top:866px;width:1px;height:12px;background:#1a1a1a"></div>
<div class="a" style="left:329px;top:866px;width:1px;height:12px;background:#262626"></div>
<div class="a" style="left:358px;top:866px;width:1px;height:12px;background:#1a1a1a"></div>
<div class="a" style="left:388px;top:866px;width:1px;height:12px;background:#262626"></div>
<div class="a" style="left:417px;top:866px;width:1px;height:12px;background:#1a1a1a"></div>
<div class="a" style="left:447px;top:866px;width:1px;height:12px;background:#262626"></div>
<div class="a" style="left:476px;top:866px;width:1px;height:12px;background:#1a1a1a"></div>
<div class="a" style="left:506px;top:866px;width:1px;height:12px;background:#262626"></div>
<div class="a" style="left:535px;top:866px;width:1px;height:12px;background:#1a1a1a"></div>
<div class="a" style="left:565px;top:866px;width:1px;height:12px;background:#262626"></div>
<div class="a" style="left:594px;top:866px;width:1px;height:12px;background:#1a1a1a"></div>
<div class="a" style="left:623px;top:866px;width:1px;height:12px;background:#262626"></div>
<div class="a" style="left:653px;top:866px;width:1px;height:12px;background:#1a1a1a"></div>
<div class="a" style="left:682px;top:866px;width:1px;height:12px;background:#262626"></div>
<div class="a" style="left:712px;top:866px;width:1px;height:12px;background:#1a1a1a"></div>
<div class="a" style="left:741px;top:866px;width:1px;height:12px;background:#262626"></div>
<div class="a" style="left:771px;top:866px;width:1px;height:12px;background:#1a1a1a"></div>
<div class="a" style="left:800px;top:866px;width:1px;height:12px;background:#262626"></div>
<div class="a" style="left:830px;top:866px;width:1px;height:12px;background:#1a1a1a"></div>
<div class="a" style="left:859px;top:866px;width:1px;height:12px;background:#262626"></div>
<div class="a" style="left:888px;top:866px;width:1px;height:12px;background:#1a1a1a"></div>
<div class="a" style="left:918px;top:866px;width:1px;height:12px;background:#262626"></div>
<div class="a" style="left:947px;top:866px;width:1px;height:12px;background:#1a1a1a"></div>
<div class="a" style="left:977px;top:866px;width:1px;height:12px;background:#262626"></div>
<div class="a" style="left:1006px;top:866px;width:1px;height:12px;background:#1a1a1a"></div>
<div class="a" style="left:1036px;top:866px;width:1px;height:12px;background:#262626"></div>
<div class="a" style="left:1065px;top:866px;width:1px;height:12px;background:#1a1a1a"></div>
<div class="a" style="left:1095px;top:866px;width:1px;height:12px;background:#262626"></div>
<div class="a" style="left:1124px;top:866px;width:1px;height:12px;background:#1a1a1a"></div>
<div class="a" style="left:1154px;top:866px;width:1px;height:12px;background:#262626"></div>
<div class="a" style="left:1183px;top:866px;width:1px;height:12px;background:#1a1a1a"></div>
<div class="a" style="left:1212px;top:866px;width:1px;height:12px;background:#262626"></div>
<div class="a" style="left:1242px;top:866px;width:1px;height:12px;background:#1a1a1a"></div>
<div class="a" style="left:1271px;top:866px;width:1px;height:12px;background:#262626"></div>
<div class="a" style="left:1301px;top:866px;width:1px;height:12px;background:#1a1a1a"></div>
<div class="a" style="left:1330px;top:866px;width:1px;height:12px;background:#262626"></div>
<div class="a" style="left:1360px;top:866px;width:1px;height:12px;background:#1a1a1a"></div>
<div class="a" style="left:1389px;top:866px;width:1px;height:12px;background:#262626"></div>
<div class="a" style="left:1419px;top:866px;width:1px;height:12px;background:#1a1a1a"></div>
<div class="a" style="left:1448px;top:866px;width:1px;height:12px;background:#262626"></div>
<div class="a" style="left:1478px;top:866px;width:1px;height:12px;background:#1a1a1a"></div>
<div class="a" style="left:40px;top:847px;width:24px;height:17px;background:#5680c2;border-radius:4px"></div>
<div class="t" style="left:40px;top:848px;width:24px;text-align:center;color:#fff">8</div>
<div class="a" style="left:51px;top:864px;width:2px;height:14px;background:#5680c2"></div>
</body></html>
